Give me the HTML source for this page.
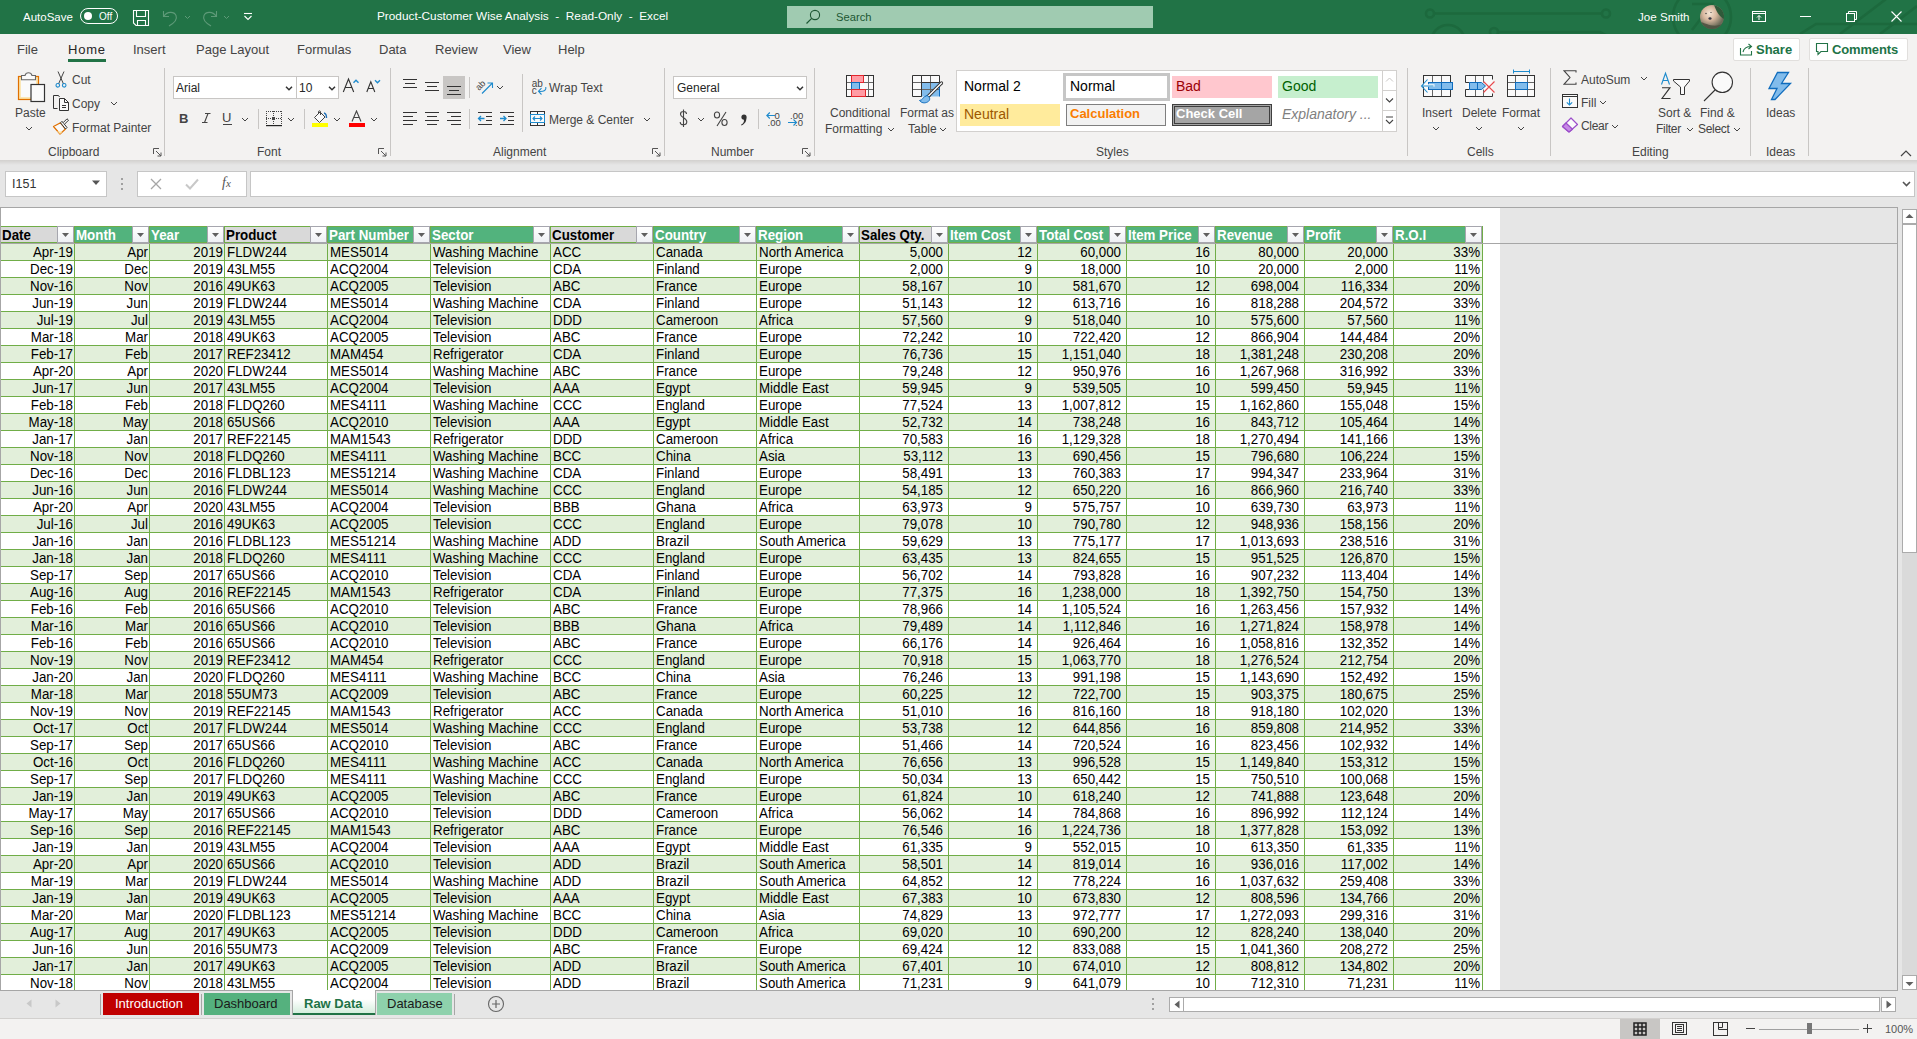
<!DOCTYPE html>
<html><head><meta charset="utf-8"><title>Excel</title>
<style>
*{margin:0;padding:0;box-sizing:border-box}
html,body{width:1917px;height:1039px;overflow:hidden;background:#E6E6E6;font-family:"Liberation Sans",sans-serif;position:relative}
.abs{position:absolute}
#sheet{position:absolute;left:0;top:0;width:1897px;height:990px;overflow:hidden}
.ht{font-weight:bold;font-size:13.33px;line-height:15px;white-space:nowrap;transform:scaleY(1.1);transform-origin:0 11.9px}
.dt{font-size:13.33px;line-height:16px;white-space:nowrap;color:#000;transform:scaleY(1.1);transform-origin:0 12.4px}
.btn{width:17px;height:17px;border:1px solid #A6A6AE;background:linear-gradient(#fff,#EEF0F4)}
.btn i{position:absolute;left:4px;top:6px;width:0;height:0;border-left:3.5px solid transparent;border-right:3.5px solid transparent;border-top:4px solid #5F5F5F}
.tt{white-space:nowrap;line-height:16px}
.rt{white-space:nowrap;font-size:12px;line-height:16px;color:#444}
.gl{color:#444}
.sep{width:1px;background:#C8C6C4}
.box{background:#fff;border:1px solid #C8C6C4}
.sty{font-size:14px}
.tab{font-size:13px}

</style></head><body>
<div id="titlebar" class="abs" style="left:0;top:0;width:1917px;height:34px;background:#217346;overflow:hidden">
  <svg class="abs" style="left:1400px;top:0" width="517" height="34" viewBox="0 0 517 34">
    <g fill="none" stroke="#1C693D" stroke-width="2.6">
      <path d="M34 13.5 H201"/><circle cx="30" cy="13.5" r="4"/><circle cx="206" cy="13.5" r="4"/>
      <circle cx="302" cy="17" r="29"/>
      <path d="M292 4 H312 L292 30"/>
      <circle cx="48" cy="42" r="17"/>
      <circle cx="94" cy="32" r="4"/><path d="M98 32 H200 L215 40"/>
      <path d="M400 34 L416 24 H517"/><path d="M440 34 L490 -4"/><path d="M480 34 L517 6"/>
    </g>
  </svg>
  <div class="abs tt" style="left:23px;top:9px;font-size:11.5px;color:#fff">AutoSave</div>
  <div class="abs" style="left:80px;top:8px;width:38px;height:16px;border:1px solid #fff;border-radius:8px"></div>
  <div class="abs" style="left:84px;top:12px;width:8px;height:8px;background:#fff;border-radius:50%"></div>
  <div class="abs tt" style="left:99px;top:8.5px;font-size:10px;color:#fff">Off</div>
  <svg class="abs" style="left:132px;top:9px" width="19" height="18" viewBox="0 0 19 18"><path d="M1.5 1.5 H16.5 V16.5 H4 L1.5 14 Z" fill="none" stroke="#fff" stroke-width="1.1"/><path d="M4.5 1.5 V7.5 H13.5 V1.5" fill="none" stroke="#fff" stroke-width="1.1"/><path d="M5.5 16.5 V11.5 H13.5 V16.5" fill="none" stroke="#fff" stroke-width="1.1"/></svg>
  <svg class="abs" style="left:162px;top:10px" width="30" height="18" viewBox="0 0 30 18"><path d="M1.5 1 V6.5 H7" fill="none" stroke="#5E9A78" stroke-width="1.1"/><path d="M2 6 C 5 1.5, 12 1, 14 5.5 C 15.5 9, 13 12.5, 7 16" fill="none" stroke="#5E9A78" stroke-width="1.1"/><path d="M23 6 L25.5 8.5 L28 6" fill="none" stroke="#5E9A78" stroke-width="1"/></svg>
  <svg class="abs" style="left:201px;top:10px" width="30" height="18" viewBox="0 0 30 18"><path d="M15.5 1 V6.5 H10" fill="none" stroke="#5E9A78" stroke-width="1.1"/><path d="M15 6 C 12 1.5, 5 1, 3 5.5 C 1.5 9, 4 12.5, 10 16" fill="none" stroke="#5E9A78" stroke-width="1.1"/><path d="M23 6 L25.5 8.5 L28 6" fill="none" stroke="#5E9A78" stroke-width="1"/></svg>
  <svg class="abs" style="left:243px;top:12px" width="10" height="9" viewBox="0 0 10 9"><path d="M1 1.5 H9" stroke="#fff" stroke-width="1.1"/><path d="M1.5 4 L5 7.5 L8.5 4" fill="none" stroke="#fff" stroke-width="1.1"/></svg>
  <div class="abs tt" style="left:377px;top:8px;font-size:11.8px;color:#fff;white-space:pre">Product-Customer Wise Analysis  -  Read-Only  -  Excel</div>
  <div class="abs" style="left:787px;top:6px;width:366px;height:22px;background:#A0CBB1"></div>
  <svg class="abs" style="left:805px;top:9px" width="16" height="16" viewBox="0 0 16 16">
    <circle cx="10" cy="6" r="4.6" fill="none" stroke="#1D5733" stroke-width="1.1"/>
    <path d="M6.7 9.3 L1.5 14.5" stroke="#1D5733" stroke-width="1.2"/>
  </svg>
  <div class="abs tt" style="left:836px;top:9px;font-size:11.2px;color:#1D5733">Search</div>
  <div class="abs tt" style="left:1638px;top:9px;font-size:11.6px;color:#fff">Joe Smith</div>
  <svg class="abs" style="left:1700px;top:5px" width="24" height="24" viewBox="0 0 24 24">
    <defs><clipPath id="av"><circle cx="12" cy="12" r="12"/></clipPath>
    <radialGradient id="avg" cx="40%" cy="35%" r="60%"><stop offset="0" stop-color="#F4E6D6"/><stop offset="0.45" stop-color="#D9B9A0"/><stop offset="1" stop-color="#6A6A58"/></radialGradient></defs>
    <g clip-path="url(#av)">
      <rect width="24" height="24" fill="url(#avg)"/>
      <path d="M14 0 H24 V14 C 20 12, 17 8, 14 0 Z" fill="#2F5A3A"/>
      <path d="M0 17 C 6 18, 14 24, 24 18 V24 H0 Z" fill="#4A5040" opacity="0.85"/>
      <circle cx="6" cy="8.5" r="0.7" fill="#333"/><circle cx="11" cy="7.5" r="0.6" fill="#333"/>
      <ellipse cx="10" cy="13.5" rx="1.6" ry="1.2" fill="#3A3A48"/>
      
    </g>
  </svg>
  <svg class="abs" style="left:1752px;top:11px" width="14" height="11" viewBox="0 0 14 11">
    <rect x="0.5" y="0.5" width="13" height="10" fill="none" stroke="#fff" stroke-width="1"/>
    <path d="M0.5 2.5 H13.5" stroke="#fff" stroke-width="1"/>
    <path d="M7 9 V4.5 M5 6.5 L7 4.5 L9 6.5" fill="none" stroke="#fff" stroke-width="1"/>
  </svg>
  <div class="abs" style="left:1800px;top:16px;width:11px;height:1px;background:#fff"></div>
  <svg class="abs" style="left:1845px;top:10px" width="13" height="13" viewBox="0 0 13 13">
    <rect x="1.5" y="3.5" width="8" height="8" fill="none" stroke="#fff" stroke-width="1"/>
    <path d="M3.5 3.5 V1.5 H11.5 V9.5 H9.5" fill="none" stroke="#fff" stroke-width="1"/>
  </svg>
  <svg class="abs" style="left:1891px;top:11px" width="11" height="11" viewBox="0 0 11 11">
    <path d="M0.5 0.5 L10.5 10.5 M10.5 0.5 L0.5 10.5" stroke="#fff" stroke-width="1.1"/>
  </svg>
</div>

<div id="ribbon" class="abs" style="left:0;top:34px;width:1917px;height:126px;background:#F3F2F1"></div>
<div class="abs" style="left:0;top:160px;width:1917px;height:5px;background:linear-gradient(#D2D0CE,#E6E6E6)"></div>
<!-- tabs -->
<div class="abs rt tab" style="left:17px;top:42px">File</div>
<div class="abs rt tab" style="left:68px;top:42px;color:#262626;letter-spacing:0.8px">Home</div>
<div class="abs" style="left:68px;top:59px;width:38px;height:3px;background:#217346"></div>
<div class="abs rt tab" style="left:133px;top:42px">Insert</div>
<div class="abs rt tab" style="left:196px;top:42px">Page Layout</div>
<div class="abs rt tab" style="left:297px;top:42px">Formulas</div>
<div class="abs rt tab" style="left:379px;top:42px">Data</div>
<div class="abs rt tab" style="left:435px;top:42px">Review</div>
<div class="abs rt tab" style="left:503px;top:42px">View</div>
<div class="abs rt tab" style="left:558px;top:42px">Help</div>
<!-- share / comments -->
<div class="abs" style="left:1733px;top:38px;width:67px;height:23px;background:#fff;border:1px solid #E1DFDD;border-radius:2px"></div>
<svg class="abs" style="left:1738px;top:41px" width="16" height="16" viewBox="0 0 16 16"><path d="M2.5 7 V14 H13.5 V10" fill="none" stroke="#217346" stroke-width="1.1"/><path d="M5 11 C 6 7, 9 5.5, 13 5.5 M10.5 3 L13.5 5.5 L10.5 8" fill="none" stroke="#217346" stroke-width="1.1"/></svg>
<div class="abs rt" style="left:1756px;top:42px;font-size:13px;color:#217346;font-weight:bold">Share</div>
<div class="abs" style="left:1809px;top:38px;width:99px;height:23px;background:#fff;border:1px solid #E1DFDD;border-radius:2px"></div>
<svg class="abs" style="left:1815px;top:42px" width="14" height="14" viewBox="0 0 14 14"><path d="M1.5 1.5 H12.5 V9.5 H6 L3 12.5 V9.5 H1.5 Z" fill="none" stroke="#217346" stroke-width="1.1"/></svg>
<div class="abs rt" style="left:1832px;top:42px;font-size:13px;color:#217346;font-weight:bold;letter-spacing:-0.15px">Comments</div>
<!-- separators -->
<div class="abs sep" style="left:164px;top:68px;height:88px"></div>
<div class="abs sep" style="left:390px;top:68px;height:88px"></div>
<div class="abs sep" style="left:664px;top:68px;height:88px"></div>
<div class="abs sep" style="left:814px;top:68px;height:88px"></div>
<div class="abs sep" style="left:1407px;top:68px;height:88px"></div>
<div class="abs sep" style="left:1550px;top:68px;height:88px"></div>
<div class="abs sep" style="left:1750px;top:68px;height:88px"></div>
<div class="abs sep" style="left:1808px;top:68px;height:88px"></div>
<!-- group labels -->
<div class="abs rt gl" style="left:48px;top:144px">Clipboard</div>
<div class="abs rt gl" style="left:257px;top:144px">Font</div>
<div class="abs rt gl" style="left:493px;top:144px">Alignment</div>
<div class="abs rt gl" style="left:711px;top:144px">Number</div>
<div class="abs rt gl" style="left:1096px;top:144px">Styles</div>
<div class="abs rt gl" style="left:1467px;top:144px">Cells</div>
<div class="abs rt gl" style="left:1632px;top:144px">Editing</div>
<div class="abs rt gl" style="left:1766px;top:144px">Ideas</div>
<!-- dialog launchers -->
<svg class="abs" style="left:153px;top:148px" width="9" height="9" viewBox="0 0 9 9"><path d="M0.5 6 V0.5 H6 M3 3 L8 8 M4.5 8 H8 V4.5" fill="none" stroke="#555" stroke-width="1"/></svg>
<svg class="abs" style="left:378px;top:148px" width="9" height="9" viewBox="0 0 9 9"><path d="M0.5 6 V0.5 H6 M3 3 L8 8 M4.5 8 H8 V4.5" fill="none" stroke="#555" stroke-width="1"/></svg>
<svg class="abs" style="left:652px;top:148px" width="9" height="9" viewBox="0 0 9 9"><path d="M0.5 6 V0.5 H6 M3 3 L8 8 M4.5 8 H8 V4.5" fill="none" stroke="#555" stroke-width="1"/></svg>
<svg class="abs" style="left:802px;top:148px" width="9" height="9" viewBox="0 0 9 9"><path d="M0.5 6 V0.5 H6 M3 3 L8 8 M4.5 8 H8 V4.5" fill="none" stroke="#555" stroke-width="1"/></svg>
<!-- collapse -->
<svg class="abs" style="left:1900px;top:149px" width="12" height="8" viewBox="0 0 12 8"><path d="M1 7 L6 2 L11 7" fill="none" stroke="#444" stroke-width="1.2"/></svg>

<!-- CLIPBOARD -->
<svg class="abs" style="left:17px;top:71px" width="30" height="32" viewBox="0 0 30 32">
  <rect x="1.5" y="5.5" width="20" height="23" fill="#FCE3A6" stroke="#E07000" stroke-width="1.2"/>
  <rect x="3.8" y="7.8" width="15.4" height="18.4" fill="#FAFAFA"/>
  <path d="M4.5 8.8 V4.5 H8 C9 0.8, 14 0.8, 15 4.5 H18.5 V8.8 Z" fill="#FAFAFA" stroke="#666" stroke-width="1.1"/>
  <rect x="14" y="13.5" width="13.5" height="17" fill="#FAFAFA" stroke="#333" stroke-width="1.2"/>
</svg>
<div class="abs rt" style="left:15px;top:105px">Paste</div>
<svg class="abs chev" style="left:25px;top:126px" width="8" height="5" viewBox="0 0 8 5"><path d="M1 1 L4 4 L7 1" fill="none" stroke="#444" stroke-width="1"/></svg>
<svg class="abs" style="left:55px;top:71px" width="12" height="17" viewBox="0 0 12 17">
  <path d="M3 0.5 L8.5 13 M9 0.5 L3.5 13" stroke="#444" stroke-width="1"/>
  <circle cx="2.8" cy="14.3" r="1.8" fill="none" stroke="#1E8BCD" stroke-width="1.1"/>
  <circle cx="9.2" cy="14.3" r="1.8" fill="none" stroke="#1E8BCD" stroke-width="1.1"/>
</svg>
<div class="abs rt" style="left:72px;top:72px">Cut</div>
<svg class="abs" style="left:52px;top:94px" width="18" height="18" viewBox="0 0 18 18"><path d="M7.5 3 L6.5 1.5 H1.5 V14.5 H5.5" fill="none" stroke="#333" stroke-width="1"/><path d="M7.5 4.5 H12.5 L16.5 8.5 V16.5 H7.5 Z" fill="#FAFAFA" stroke="#333" stroke-width="1"/><path d="M12.5 4.5 V8.5 H16.5" fill="none" stroke="#333" stroke-width="1"/><path d="M10 11.5 H14 M10 13.5 H14" stroke="#333" stroke-width="1"/></svg>
<div class="abs rt" style="left:72px;top:96px">Copy</div>
<svg class="abs chev" style="left:110px;top:101px" width="8" height="5" viewBox="0 0 8 5"><path d="M1 1 L4 4 L7 1" fill="none" stroke="#444" stroke-width="1"/></svg>
<svg class="abs" style="left:52px;top:118px" width="18" height="18" viewBox="0 0 18 18"><path d="M1.5 8.5 L8.5 4.8 L13.5 11 L8 16 Z" fill="#FAFAFA" stroke="#E07000" stroke-width="1.2" stroke-linejoin="round"/><path d="M5 13 L8 16 L10.5 13.8 Z" fill="#FCE3A6"/><path d="M8.5 4.8 L13.5 11 L15 9.5 L10 3.3 Z" fill="#FAFAFA" stroke="#333" stroke-width="1"/><path d="M12.5 6.2 L16.5 2.2 L15 0.8 L11 4.8" fill="#FAFAFA" stroke="#333" stroke-width="1"/></svg>
<div class="abs rt" style="left:72px;top:120px">Format Painter</div>

<!-- FONT -->
<div class="abs box" style="left:173px;top:76px;width:124px;height:23px"></div>
<div class="abs rt" style="left:176px;top:80px;color:#262626">Arial</div>
<svg class="abs chev" style="left:285px;top:86px" width="8" height="5" viewBox="0 0 8 5"><path d="M1 0.8 L4 3.8 L7 0.8" fill="none" stroke="#333" stroke-width="1.5"/></svg>
<div class="abs box" style="left:296px;top:76px;width:43px;height:23px"></div>
<div class="abs rt" style="left:299px;top:80px;color:#262626">10</div>
<svg class="abs chev" style="left:328px;top:86px" width="8" height="5" viewBox="0 0 8 5"><path d="M1 0.8 L4 3.8 L7 0.8" fill="none" stroke="#333" stroke-width="1.5"/></svg>

<svg class="abs" style="left:340px;top:76px" width="45" height="18" viewBox="0 0 45 18"><path d="M3.3 16 L8.5 3 L13.7 16 M5.2 11.5 H11.8" fill="none" stroke="#333" stroke-width="1.1"/><path d="M13.5 6.8 L16 4.3 L18.5 6.8" fill="none" stroke="#1E8BCD" stroke-width="1.4"/><path d="M26.8 16 L30.8 5.8 L34.8 16 M28.3 12.5 H33.3" fill="none" stroke="#333" stroke-width="1.1"/><path d="M35 4.2 L37.5 6.7 L40 4.2" fill="none" stroke="#1E8BCD" stroke-width="1.4"/></svg>


<div class="abs rt" style="left:179px;top:111px;font-weight:bold;font-size:13px">B</div>
<svg class="abs" style="left:200px;top:111px" width="12" height="14" viewBox="0 0 12 14"><path d="M5 2.5 H10.5 M2 11.5 H7.5 M8 2.5 L4.5 11.5" stroke="#444" stroke-width="1.1" fill="none"/></svg>
<div class="abs rt" style="left:222px;top:110px;font-size:13px">U</div>
<div class="abs" style="left:223px;top:124px;width:9px;height:1px;background:#444"></div>
<svg class="abs chev" style="left:241px;top:117px" width="8" height="5" viewBox="0 0 8 5"><path d="M1 1 L4 4 L7 1" fill="none" stroke="#444" stroke-width="1"/></svg>
<div class="abs sep" style="left:258px;top:109px;height:20px"></div>
<svg class="abs" style="left:266px;top:111px" width="16" height="16" viewBox="0 0 16 16"><g fill="#444"><rect x="0" y="0" width="1" height="1"/><rect x="0" y="7" width="1" height="1"/><rect x="2" y="0" width="1" height="1"/><rect x="2" y="7" width="1" height="1"/><rect x="4" y="0" width="1" height="1"/><rect x="4" y="7" width="1" height="1"/><rect x="6" y="0" width="1" height="1"/><rect x="6" y="7" width="1" height="1"/><rect x="8" y="0" width="1" height="1"/><rect x="8" y="7" width="1" height="1"/><rect x="10" y="0" width="1" height="1"/><rect x="10" y="7" width="1" height="1"/><rect x="12" y="0" width="1" height="1"/><rect x="12" y="7" width="1" height="1"/><rect x="14" y="0" width="1" height="1"/><rect x="14" y="7" width="1" height="1"/><rect x="0" y="0" width="1" height="1"/><rect x="15" y="0" width="1" height="1"/><rect x="7" y="0" width="1" height="1"/><rect x="0" y="2" width="1" height="1"/><rect x="15" y="2" width="1" height="1"/><rect x="7" y="2" width="1" height="1"/><rect x="0" y="4" width="1" height="1"/><rect x="15" y="4" width="1" height="1"/><rect x="7" y="4" width="1" height="1"/><rect x="0" y="6" width="1" height="1"/><rect x="15" y="6" width="1" height="1"/><rect x="7" y="6" width="1" height="1"/><rect x="0" y="8" width="1" height="1"/><rect x="15" y="8" width="1" height="1"/><rect x="7" y="8" width="1" height="1"/><rect x="0" y="10" width="1" height="1"/><rect x="15" y="10" width="1" height="1"/><rect x="7" y="10" width="1" height="1"/><rect x="0" y="12" width="1" height="1"/><rect x="15" y="12" width="1" height="1"/><rect x="7" y="12" width="1" height="1"/><rect x="6" y="6" width="3" height="3"/></g><rect x="0" y="14" width="16" height="1.2" fill="#222"/></svg>
<svg class="abs chev" style="left:287px;top:117px" width="8" height="5" viewBox="0 0 8 5"><path d="M1 1 L4 4 L7 1" fill="none" stroke="#444" stroke-width="1"/></svg>
<div class="abs sep" style="left:304px;top:109px;height:20px"></div>
<svg class="abs" style="left:312px;top:110px" width="17" height="18" viewBox="0 0 17 18"><path d="M2.5 7.5 L8 2 L13 7 L7.5 12.5 Z" fill="#FAFAFA" stroke="#444" stroke-width="1"/><path d="M6.5 3.5 V1.8 C6.5 0.5, 8.5 0.5, 8.5 1.8 V5" fill="none" stroke="#444" stroke-width="1"/><path d="M12 3 C 14 3.5, 14.5 5, 14.5 8" fill="none" stroke="#1E6FB8" stroke-width="1.4"/><rect x="0" y="13" width="16" height="4" fill="#FFFF00"/></svg>
<svg class="abs chev" style="left:333px;top:117px" width="8" height="5" viewBox="0 0 8 5"><path d="M1 1 L4 4 L7 1" fill="none" stroke="#444" stroke-width="1"/></svg>
<svg class="abs" style="left:351px;top:110px" width="12" height="12" viewBox="0 0 12 12"><path d="M1 11.5 L5.5 1 L10 11.5 M2.8 7.5 H8.2" fill="none" stroke="#444" stroke-width="1.1"/></svg>
<div class="abs" style="left:349px;top:123px;width:16px;height:4px;background:#FF0000"></div>
<svg class="abs chev" style="left:370px;top:117px" width="8" height="5" viewBox="0 0 8 5"><path d="M1 1 L4 4 L7 1" fill="none" stroke="#444" stroke-width="1"/></svg>

<!-- ALIGNMENT -->

<svg class="abs" style="left:395px;top:70px" width="125" height="65" viewBox="0 0 125 65"><rect x="48" y="6" width="22" height="23" fill="#C8C6C4"/><path d="M8 9.5 H22 M10 13.5 H20 M8 17.5 H22 M30 12.5 H44 M32 16.5 H42 M30 20.5 H44 M52 16.5 H66 M54 20.5 H64 M52 24.5 H66 M8 42.5 H22 M8 46.5 H18 M8 50.5 H22 M8 54.5 H18 M30 42.5 H44 M32 46.5 H42 M30 50.5 H44 M32 54.5 H42 M52 42.5 H66 M56 46.5 H66 M52 50.5 H66 M56 54.5 H66 M83 42.5 H97 M91 46.5 H97 M91 50.5 H97 M83 54.5 H97 M105 42.5 H119 M113 46.5 H119 M113 50.5 H119 M105 54.5 H119" stroke="#333" stroke-width="1" fill="none"/><path d="M89.5 48.5 H83.5 M86 46 L83.5 48.5 L86 51 M105 48.5 H111 M108.5 46 L111 48.5 L108.5 51" stroke="#1E8BCD" stroke-width="1.3" fill="none"/><text x="0" y="0" font-size="9" font-family="Liberation Sans" fill="#444" transform="translate(84 21) rotate(-45)">ab</text><path d="M87 23.5 L97.5 13 M92.5 13 H97.5 V18" stroke="#1E8BCD" stroke-width="1.1" fill="none"/></svg>
<div class="abs sep" style="left:469px;top:77px;height:21px"></div>

<svg class="abs chev" style="left:496px;top:85px" width="8" height="5" viewBox="0 0 8 5"><path d="M1 1 L4 4 L7 1" fill="none" stroke="#444" stroke-width="1"/></svg>

<div class="abs sep" style="left:469px;top:109px;height:20px"></div>

<div class="abs sep" style="left:522px;top:74px;height:58px"></div>
<svg class="abs" style="left:525px;top:74px" width="25" height="58" viewBox="0 0 25 58"><text x="6.8" y="12.6" font-size="10" font-family="Liberation Sans" fill="#444">ab</text><text x="6.8" y="19.8" font-size="10" font-family="Liberation Sans" fill="#444">c</text><path d="M20.8 13 C 21.5 16, 19.5 17.8, 14 17.5 M16.5 14.2 L13.5 17.3 L16.5 20.5" fill="none" stroke="#1E8BCD" stroke-width="1.1"/><rect x="5.5" y="37.5" width="14" height="14" fill="#FAFAFA" stroke="#333" stroke-width="1"/><path d="M12.5 37.5 V51.5" stroke="#333" stroke-width="1"/><rect x="5.5" y="40.5" width="14" height="8" fill="#FAFAFA" stroke="#1E8BCD" stroke-width="1"/><path d="M8 44.5 H17 M10 42.5 L8 44.5 L10 46.5 M15 42.5 L17 44.5 L15 46.5" fill="none" stroke="#1E8BCD" stroke-width="1.1"/></svg>
<div class="abs rt" style="left:549px;top:80px">Wrap Text</div>

<div class="abs rt" style="left:549px;top:112px">Merge &amp; Center</div>
<svg class="abs chev" style="left:643px;top:117px" width="8" height="5" viewBox="0 0 8 5"><path d="M1 1 L4 4 L7 1" fill="none" stroke="#444" stroke-width="1"/></svg>

<!-- NUMBER -->
<div class="abs box" style="left:673px;top:76px;width:134px;height:23px"></div>
<div class="abs rt" style="left:677px;top:80px;color:#262626">General</div>
<svg class="abs chev" style="left:796px;top:86px" width="8" height="5" viewBox="0 0 8 5"><path d="M1 0.8 L4 3.8 L7 0.8" fill="none" stroke="#333" stroke-width="1.5"/></svg>

<svg class="abs chev" style="left:697px;top:117px" width="8" height="5" viewBox="0 0 8 5"><path d="M1 1 L4 4 L7 1" fill="none" stroke="#444" stroke-width="1"/></svg>


<div class="abs sep" style="left:758px;top:109px;height:20px"></div>
<svg class="abs" style="left:670px;top:104px" width="145" height="28" viewBox="0 0 145 28"><path d="M16.5 10 C 16.5 8, 15 7.5, 13.5 7.5 C 11.5 7.5, 10.5 8.5, 10.5 10.2 C 10.5 14, 16.8 13.5, 16.8 17.8 C 16.8 19.8, 15.2 20.8, 13.5 20.8 C 11.5 20.8, 10.2 19.8, 10.2 18 M13.5 5.5 V23" fill="none" stroke="#444" stroke-width="1.1"/><ellipse cx="47" cy="11" rx="2.6" ry="3" fill="none" stroke="#444" stroke-width="1.1"/><ellipse cx="54.5" cy="18.5" rx="2.6" ry="3" fill="none" stroke="#444" stroke-width="1.1"/><path d="M56 8 L47 22" stroke="#444" stroke-width="1.1"/><circle cx="74" cy="13" r="2.6" fill="#333"/><path d="M75.5 12 C 77.5 15, 76 19.5, 71.5 21.5 L71 20.8 C 74 19, 74.5 17, 73.5 15 Z" fill="#333"/><text x="104.5" y="14.5" font-size="9.5" font-family="Liberation Sans" fill="#444">0</text><text x="97.5" y="22" font-size="9.5" font-family="Liberation Sans" fill="#444">.00</text><path d="M105 11.5 H97 M99.8 8.5 L96.8 11.5 L99.8 14.5" fill="none" stroke="#1E8BCD" stroke-width="1.1"/><text x="120" y="14.5" font-size="9.5" font-family="Liberation Sans" fill="#444">.00</text><text x="125" y="22" font-size="9.5" font-family="Liberation Sans" fill="#444">.0</text><path d="M118 18.5 H126.5 M123.5 15.5 L126.5 18.5 L123.5 21.5" fill="none" stroke="#1E8BCD" stroke-width="1.1"/></svg>

<!-- Conditional formatting / format as table -->
<svg class="abs" style="left:840px;top:70px" width="110" height="35" viewBox="0 0 110 35"><rect x="6.5" y="5.5" width="27" height="21" fill="#FAFAFA"/><path d="M6.5 12.5 H33.5 M6.5 19.5 H33.5 M28.5 5.5 V26.5" stroke="#666" stroke-width="1" fill="none"/><rect x="6.5" y="5.5" width="27" height="21" fill="none" stroke="#333" stroke-width="1"/><rect x="11.5" y="5.5" width="12" height="7" fill="#FF9CA4" stroke="#E3262C" stroke-width="1"/><rect x="11.5" y="12.5" width="8" height="7" fill="#82BCEB" stroke="#0F6CBD" stroke-width="1"/><rect x="11.5" y="19.5" width="14" height="7" fill="#FF9CA4" stroke="#E3262C" stroke-width="1"/><rect x="72.5" y="5.5" width="27" height="21" fill="#FAFAFA"/><rect x="81.5" y="12.5" width="18" height="14" fill="#82BCEB"/><path d="M72.5 12.5 H81.5 M72.5 19.5 H99.5 M81.5 5.5 V12.5 M90.5 5.5 V26.5" stroke="#666" stroke-width="1" fill="none"/><path d="M81.5 26.5 V12.5 H99.5 V26.5" stroke="#0F6CBD" stroke-width="1" fill="none"/><path d="M81.5 26.5 V5.5 H99.5 V12.5 H81.5" stroke="#333" stroke-width="1" fill="none"/><path d="M81.5 26.5 H72.5 V5.5" stroke="#333" stroke-width="1" fill="none"/><path d="M72.5 5.5 H81.5" stroke="#333" stroke-width="1" fill="none"/><path d="M101.5 13 L88 26.5" stroke="#333" stroke-width="3.2" stroke-linecap="round"/><path d="M101.5 13 L88 26.5" stroke="#fff" stroke-width="1.4" stroke-linecap="round"/><path d="M87 25.5 C 90.5 27, 90.5 30.5, 87.5 32 C 84.5 33.5, 81.5 33, 79.5 30.5 C 82.5 30.5, 83 26.5, 87 25.5 Z" fill="#82BCEB" stroke="#0F6CBD" stroke-width="1"/></svg>
<div class="abs rt" style="left:830px;top:105px">Conditional</div>
<div class="abs rt" style="left:825px;top:121px">Formatting</div>
<svg class="abs chev" style="left:887px;top:127px" width="8" height="5" viewBox="0 0 8 5"><path d="M1 1 L4 4 L7 1" fill="none" stroke="#444" stroke-width="1"/></svg>

<div class="abs rt" style="left:900px;top:105px">Format as</div>
<div class="abs rt" style="left:908px;top:121px">Table</div>
<svg class="abs chev" style="left:939px;top:127px" width="8" height="5" viewBox="0 0 8 5"><path d="M1 1 L4 4 L7 1" fill="none" stroke="#444" stroke-width="1"/></svg>

<!-- STYLES gallery -->
<div class="abs" style="left:956px;top:70px;width:441px;height:62px;background:#fff;border:1px solid #D2D0CE"></div>
<div class="abs rt sty" style="left:964px;top:78px;color:#000">Normal 2</div>
<div class="abs" style="left:1063px;top:73px;width:107px;height:28px;border:3px solid #C6C6C6"></div>
<div class="abs rt sty" style="left:1070px;top:78px;color:#000">Normal</div>
<div class="abs" style="left:1172px;top:76px;width:100px;height:22px;background:#FFC7CE"></div>
<div class="abs rt sty" style="left:1176px;top:78px;color:#9C0006">Bad</div>
<div class="abs" style="left:1278px;top:76px;width:100px;height:22px;background:#C6EFCE"></div>
<div class="abs rt sty" style="left:1282px;top:78px;color:#006100">Good</div>
<div class="abs" style="left:960px;top:104px;width:100px;height:22px;background:#FFEB9C"></div>
<div class="abs rt sty" style="left:964px;top:106px;color:#9C5700">Neutral</div>
<div class="abs" style="left:1066px;top:104px;width:100px;height:22px;background:#F2F2F2;border:1px solid #7F7F7F"></div>
<div class="abs rt sty" style="left:1070px;top:106px;color:#FA7D00;font-weight:bold;font-size:13px">Calculation</div>
<div class="abs" style="left:1172px;top:104px;width:100px;height:22px;background:#A5A5A5;border:3px double #3F3F3F"></div>
<div class="abs rt sty" style="left:1176px;top:106px;color:#fff;font-weight:bold;font-size:13px">Check Cell</div>
<div class="abs rt sty" style="left:1282px;top:106px;color:#7F7F7F;font-style:italic">Explanatory ...</div>
<div class="abs" style="left:1382px;top:70px;width:15px;height:62px;border-left:1px solid #D2D0CE"></div>
<div class="abs" style="left:1382px;top:90px;width:15px;height:1px;background:#D2D0CE"></div>
<div class="abs" style="left:1382px;top:110px;width:15px;height:1px;background:#D2D0CE"></div>
<svg class="abs" style="left:1385px;top:77px" width="9" height="5" viewBox="0 0 9 5"><path d="M1 4.5 L4.5 1 L8 4.5" fill="none" stroke="#C8C6C4" stroke-width="1"/></svg>
<svg class="abs" style="left:1385px;top:98px" width="9" height="5" viewBox="0 0 9 5"><path d="M1 0.5 L4.5 4 L8 0.5" fill="none" stroke="#444" stroke-width="1.1"/></svg>
<svg class="abs" style="left:1385px;top:116px" width="9" height="9" viewBox="0 0 9 9"><path d="M1 1 H8 M1 4 L4.5 7.5 L8 4" fill="none" stroke="#444" stroke-width="1.1"/></svg>

<!-- CELLS -->
<svg class="abs" style="left:1415px;top:66px" width="130" height="36" viewBox="0 0 130 36"><rect x="8.5" y="9.5" width="27" height="21" fill="#FAFAFA"/><path d="M17.5 9.5 V30.5 M26.5 9.5 V30.5" stroke="#666" stroke-width="1"/><rect x="8.5" y="9.5" width="27" height="21" fill="none" stroke="#333" stroke-width="1"/><rect x="13.5" y="16.5" width="24" height="7" fill="#82BCEB" stroke="#0F6CBD" stroke-width="1"/><path d="M26.5 16.5 V23.5" stroke="#0F6CBD" stroke-width="1"/><path d="M7.5 19.5 H19.5" stroke="#fff" stroke-width="2.4"/><path d="M12.5 13.5 L6.5 20.0 L12.5 26.5 M6.5 20.0 H18.5" stroke="#1E8BCD" stroke-width="1.1" fill="none"/><rect x="50.5" y="9.5" width="27" height="21" fill="#FAFAFA"/><path d="M60.5 9.5 V16.5 M60.5 23.5 V30.5 M68.5 9.5 V16.5 M68.5 23.5 V30.5" stroke="#666" stroke-width="1"/><path d="M54.5 16.5 H50.5 V9.5 H77.5 V13.5 M54.5 23.5 H50.5 V30.5 H77.5 V27.5" stroke="#333" stroke-width="1" fill="none"/><path d="M54.5 16.5 H66.5 L70.5 20.0 L66.5 23.5 H54.5 Z" fill="#82BCEB" stroke="#0F6CBD" stroke-width="1"/><path d="M62.5 16.5 V23.5" stroke="#0F6CBD" stroke-width="1"/><path d="M68.5 15.5 L79.5 26.5 M79.5 15.5 L68.5 26.5" stroke="#E8484B" stroke-width="1.1"/><rect x="92.5" y="9.5" width="27" height="21" fill="#FAFAFA"/><path d="M100.5 9.5 V30.5 M112.5 9.5 V30.5 M92.5 16.5 H119.5 M92.5 23.5 H119.5" stroke="#666" stroke-width="1"/><rect x="92.5" y="9.5" width="27" height="21" fill="none" stroke="#333" stroke-width="1"/><rect x="100.5" y="16.5" width="12" height="7" fill="#82BCEB" stroke="#0F6CBD" stroke-width="1"/><path d="M98.5 5.5 H114.5 M98.5 3.5 V7.5 M114.5 3.5 V7.5" stroke="#1E8BCD" stroke-width="1"/></svg>
<div class="abs rt" style="left:1422px;top:105px">Insert</div>
<svg class="abs chev" style="left:1432px;top:126px" width="8" height="5" viewBox="0 0 8 5"><path d="M1 1 L4 4 L7 1" fill="none" stroke="#444" stroke-width="1"/></svg>

<div class="abs rt" style="left:1462px;top:105px">Delete</div>
<svg class="abs chev" style="left:1475px;top:126px" width="8" height="5" viewBox="0 0 8 5"><path d="M1 1 L4 4 L7 1" fill="none" stroke="#444" stroke-width="1"/></svg>

<div class="abs rt" style="left:1502px;top:105px">Format</div>
<svg class="abs chev" style="left:1517px;top:126px" width="8" height="5" viewBox="0 0 8 5"><path d="M1 1 L4 4 L7 1" fill="none" stroke="#444" stroke-width="1"/></svg>

<!-- EDITING -->
<svg class="abs" style="left:1563px;top:70px" width="14" height="15" viewBox="0 0 14 15"><path d="M13 2.5 V0.7 H1 L7 7.5 L1 14.3 H13 V12.5" fill="none" stroke="#444" stroke-width="1.1"/></svg>
<div class="abs rt" style="left:1581px;top:72px">AutoSum</div>
<svg class="abs chev" style="left:1640px;top:76px" width="8" height="5" viewBox="0 0 8 5"><path d="M1 1 L4 4 L7 1" fill="none" stroke="#444" stroke-width="1"/></svg>
<svg class="abs" style="left:1562px;top:93px" width="17" height="16" viewBox="0 0 17 16"><rect x="0.5" y="1.5" width="15" height="13" fill="#FAFAFA" stroke="#333" stroke-width="1"/><path d="M0.5 3.5 H15.5" stroke="#333" stroke-width="1"/><path d="M7.5 5.5 V12 M4.8 9.3 L7.5 12 L10.2 9.3" fill="none" stroke="#1E8BCD" stroke-width="1.1"/></svg>
<div class="abs rt" style="left:1581px;top:95px">Fill</div>
<svg class="abs chev" style="left:1599px;top:100px" width="8" height="5" viewBox="0 0 8 5"><path d="M1 1 L4 4 L7 1" fill="none" stroke="#444" stroke-width="1"/></svg>
<svg class="abs" style="left:1561px;top:116px" width="18" height="17" viewBox="0 0 18 17"><path d="M1.5 10.5 L10 2 L16.5 8.5 L8 16 Z" fill="#FAFAFA" stroke="#9B4DCA" stroke-width="1.2" stroke-linejoin="round"/><path d="M1.5 10.5 L5 7 L11.5 13.3 L8 16 Z" fill="#C789E6" stroke="#9B4DCA" stroke-width="1.2" stroke-linejoin="round"/></svg>
<div class="abs rt" style="left:1581px;top:118px;letter-spacing:-0.3px">Clear</div>
<svg class="abs chev" style="left:1611px;top:124px" width="8" height="5" viewBox="0 0 8 5"><path d="M1 1 L4 4 L7 1" fill="none" stroke="#444" stroke-width="1"/></svg>
<svg class="abs" style="left:1655px;top:66px" width="145" height="40" viewBox="0 0 145 40"><path d="M6.5 18.5 L10.5 7.2 L14.5 18.5 M8 14.5 H13" stroke="#1E8BCD" stroke-width="1.1" fill="none"/><path d="M7 21.7 H15 L7 32.5 H15.5" stroke="#333" stroke-width="1.1" fill="none"/><path d="M18.5 13.5 H34.5 V15 L29.5 21 V28.5 H25.5 V21 L18.5 15 Z" fill="#FAFAFA" stroke="#333" stroke-width="1" stroke-linejoin="round"/><circle cx="67.3" cy="16.3" r="10.2" fill="#FAFAFA" stroke="#333" stroke-width="1.1"/><path d="M60 24 L49 35" stroke="#333" stroke-width="1.1"/><path d="M122.5 6.5 H133.5 L126.5 17.5 H135.5 L120 33.5 H116.5 L122 22.5 H114 Z" fill="#82BCEB" stroke="#0F6CBD" stroke-width="1.3" stroke-linejoin="miter"/></svg>
<div class="abs rt" style="left:1658px;top:105px">Sort &amp;</div>
<div class="abs rt" style="left:1656px;top:121px;letter-spacing:-0.3px">Filter</div>
<svg class="abs chev" style="left:1686px;top:127px" width="8" height="5" viewBox="0 0 8 5"><path d="M1 1 L4 4 L7 1" fill="none" stroke="#444" stroke-width="1"/></svg>

<div class="abs rt" style="left:1700px;top:105px">Find &amp;</div>
<div class="abs rt" style="left:1698px;top:121px;letter-spacing:-0.3px">Select</div>
<svg class="abs chev" style="left:1733px;top:127px" width="8" height="5" viewBox="0 0 8 5"><path d="M1 1 L4 4 L7 1" fill="none" stroke="#444" stroke-width="1"/></svg>

<!-- IDEAS -->

<div class="abs rt" style="left:1766px;top:105px">Ideas</div>

<div class="abs box" style="left:5px;top:171px;width:102px;height:26px;border-color:#C6C6C6"></div>
<div class="abs tt" style="left:12px;top:176px;font-size:12.5px;color:#333">I151</div>
<svg class="abs" style="left:91px;top:180px" width="10" height="6" viewBox="0 0 10 6"><path d="M1 0.5 H9 L5 5 Z" fill="#555"/></svg>
<div class="abs" style="left:121px;top:178px;width:2px;height:2px;background:#A0A0A0"></div>
<div class="abs" style="left:121px;top:183px;width:2px;height:2px;background:#A0A0A0"></div>
<div class="abs" style="left:121px;top:188px;width:2px;height:2px;background:#A0A0A0"></div>
<div class="abs box" style="left:137px;top:171px;width:110px;height:26px;border-color:#C6C6C6"></div>
<svg class="abs" style="left:150px;top:178px" width="12" height="12" viewBox="0 0 12 12"><path d="M1 1 L11 11 M11 1 L1 11" stroke="#A6A6A6" stroke-width="1.3"/></svg>
<svg class="abs" style="left:185px;top:178px" width="14" height="12" viewBox="0 0 14 12"><path d="M1 6.5 L5 10.5 L13 1.5" fill="none" stroke="#C8C8C8" stroke-width="2"/></svg>
<div class="abs tt" style="left:222px;top:175px;font-size:14px;color:#555;font-family:'Liberation Serif';font-style:italic">f<span style="font-size:11px">x</span></div>
<div class="abs box" style="left:250px;top:171px;width:1665px;height:26px;border-color:#C6C6C6"></div>
<svg class="abs" style="left:1902px;top:181px" width="9" height="6" viewBox="0 0 9 6"><path d="M1 1 L4.5 4.5 L8 1" fill="none" stroke="#555" stroke-width="1.6"/></svg>
<!-- sheet frame -->
<div class="abs" style="left:0;top:207px;width:1898px;height:1px;background:#A6A6A6"></div>
<div class="abs" style="left:0;top:207px;width:1px;height:784px;background:#A6A6A6"></div>
<div class="abs" style="left:1897px;top:207px;width:1px;height:784px;background:#A6A6A6"></div>
<div class="abs" style="left:0;top:990px;width:1898px;height:1px;background:#A6A6A6"></div>
<!-- vertical scrollbar -->
<div class="abs" style="left:1902px;top:209px;width:15px;height:781px;background:#DADADA"></div>
<div class="abs" style="left:1902px;top:209px;width:15px;height:15px;background:#fff;border:1px solid #ABABAB"></div>
<svg class="abs" style="left:1905px;top:213px" width="9" height="6" viewBox="0 0 9 6"><path d="M0.5 5 L4.5 1 L8.5 5 Z" fill="#606060"/></svg>
<div class="abs" style="left:1902px;top:224px;width:15px;height:329px;background:#fff;border:1px solid #ABABAB"></div>
<div class="abs" style="left:1902px;top:975px;width:15px;height:15px;background:#fff;border:1px solid #ABABAB"></div>
<svg class="abs" style="left:1905px;top:981px" width="9" height="6" viewBox="0 0 9 6"><path d="M0.5 1 L4.5 5 L8.5 1 Z" fill="#606060"/></svg>

<div id="sheet">
<div class="abs" style="left:1px;top:208px;width:1499px;height:782px;background:#fff"></div>
<div class="abs" style="left:1px;top:226px;width:1481px;height:1px;background:#70AD47"></div>
<div class="abs" style="left:1px;top:244px;width:1481px;height:16px;background:#E2EFDA"></div>
<div class="abs" style="left:1px;top:260px;width:1481px;height:1px;background:#70AD47"></div>
<div class="abs" style="left:1px;top:277px;width:1481px;height:1px;background:#70AD47"></div>
<div class="abs" style="left:1px;top:278px;width:1481px;height:16px;background:#E2EFDA"></div>
<div class="abs" style="left:1px;top:294px;width:1481px;height:1px;background:#70AD47"></div>
<div class="abs" style="left:1px;top:311px;width:1481px;height:1px;background:#70AD47"></div>
<div class="abs" style="left:1px;top:312px;width:1481px;height:16px;background:#E2EFDA"></div>
<div class="abs" style="left:1px;top:328px;width:1481px;height:1px;background:#70AD47"></div>
<div class="abs" style="left:1px;top:345px;width:1481px;height:1px;background:#70AD47"></div>
<div class="abs" style="left:1px;top:346px;width:1481px;height:16px;background:#E2EFDA"></div>
<div class="abs" style="left:1px;top:362px;width:1481px;height:1px;background:#70AD47"></div>
<div class="abs" style="left:1px;top:379px;width:1481px;height:1px;background:#70AD47"></div>
<div class="abs" style="left:1px;top:380px;width:1481px;height:16px;background:#E2EFDA"></div>
<div class="abs" style="left:1px;top:396px;width:1481px;height:1px;background:#70AD47"></div>
<div class="abs" style="left:1px;top:413px;width:1481px;height:1px;background:#70AD47"></div>
<div class="abs" style="left:1px;top:414px;width:1481px;height:16px;background:#E2EFDA"></div>
<div class="abs" style="left:1px;top:430px;width:1481px;height:1px;background:#70AD47"></div>
<div class="abs" style="left:1px;top:447px;width:1481px;height:1px;background:#70AD47"></div>
<div class="abs" style="left:1px;top:448px;width:1481px;height:16px;background:#E2EFDA"></div>
<div class="abs" style="left:1px;top:464px;width:1481px;height:1px;background:#70AD47"></div>
<div class="abs" style="left:1px;top:481px;width:1481px;height:1px;background:#70AD47"></div>
<div class="abs" style="left:1px;top:482px;width:1481px;height:16px;background:#E2EFDA"></div>
<div class="abs" style="left:1px;top:498px;width:1481px;height:1px;background:#70AD47"></div>
<div class="abs" style="left:1px;top:515px;width:1481px;height:1px;background:#70AD47"></div>
<div class="abs" style="left:1px;top:516px;width:1481px;height:16px;background:#E2EFDA"></div>
<div class="abs" style="left:1px;top:532px;width:1481px;height:1px;background:#70AD47"></div>
<div class="abs" style="left:1px;top:549px;width:1481px;height:1px;background:#70AD47"></div>
<div class="abs" style="left:1px;top:550px;width:1481px;height:16px;background:#E2EFDA"></div>
<div class="abs" style="left:1px;top:566px;width:1481px;height:1px;background:#70AD47"></div>
<div class="abs" style="left:1px;top:583px;width:1481px;height:1px;background:#70AD47"></div>
<div class="abs" style="left:1px;top:584px;width:1481px;height:16px;background:#E2EFDA"></div>
<div class="abs" style="left:1px;top:600px;width:1481px;height:1px;background:#70AD47"></div>
<div class="abs" style="left:1px;top:617px;width:1481px;height:1px;background:#70AD47"></div>
<div class="abs" style="left:1px;top:618px;width:1481px;height:16px;background:#E2EFDA"></div>
<div class="abs" style="left:1px;top:634px;width:1481px;height:1px;background:#70AD47"></div>
<div class="abs" style="left:1px;top:651px;width:1481px;height:1px;background:#70AD47"></div>
<div class="abs" style="left:1px;top:652px;width:1481px;height:16px;background:#E2EFDA"></div>
<div class="abs" style="left:1px;top:668px;width:1481px;height:1px;background:#70AD47"></div>
<div class="abs" style="left:1px;top:685px;width:1481px;height:1px;background:#70AD47"></div>
<div class="abs" style="left:1px;top:686px;width:1481px;height:16px;background:#E2EFDA"></div>
<div class="abs" style="left:1px;top:702px;width:1481px;height:1px;background:#70AD47"></div>
<div class="abs" style="left:1px;top:719px;width:1481px;height:1px;background:#70AD47"></div>
<div class="abs" style="left:1px;top:720px;width:1481px;height:16px;background:#E2EFDA"></div>
<div class="abs" style="left:1px;top:736px;width:1481px;height:1px;background:#70AD47"></div>
<div class="abs" style="left:1px;top:753px;width:1481px;height:1px;background:#70AD47"></div>
<div class="abs" style="left:1px;top:754px;width:1481px;height:16px;background:#E2EFDA"></div>
<div class="abs" style="left:1px;top:770px;width:1481px;height:1px;background:#70AD47"></div>
<div class="abs" style="left:1px;top:787px;width:1481px;height:1px;background:#70AD47"></div>
<div class="abs" style="left:1px;top:788px;width:1481px;height:16px;background:#E2EFDA"></div>
<div class="abs" style="left:1px;top:804px;width:1481px;height:1px;background:#70AD47"></div>
<div class="abs" style="left:1px;top:821px;width:1481px;height:1px;background:#70AD47"></div>
<div class="abs" style="left:1px;top:822px;width:1481px;height:16px;background:#E2EFDA"></div>
<div class="abs" style="left:1px;top:838px;width:1481px;height:1px;background:#70AD47"></div>
<div class="abs" style="left:1px;top:855px;width:1481px;height:1px;background:#70AD47"></div>
<div class="abs" style="left:1px;top:856px;width:1481px;height:16px;background:#E2EFDA"></div>
<div class="abs" style="left:1px;top:872px;width:1481px;height:1px;background:#70AD47"></div>
<div class="abs" style="left:1px;top:889px;width:1481px;height:1px;background:#70AD47"></div>
<div class="abs" style="left:1px;top:890px;width:1481px;height:16px;background:#E2EFDA"></div>
<div class="abs" style="left:1px;top:906px;width:1481px;height:1px;background:#70AD47"></div>
<div class="abs" style="left:1px;top:923px;width:1481px;height:1px;background:#70AD47"></div>
<div class="abs" style="left:1px;top:924px;width:1481px;height:16px;background:#E2EFDA"></div>
<div class="abs" style="left:1px;top:940px;width:1481px;height:1px;background:#70AD47"></div>
<div class="abs" style="left:1px;top:957px;width:1481px;height:1px;background:#70AD47"></div>
<div class="abs" style="left:1px;top:958px;width:1481px;height:16px;background:#E2EFDA"></div>
<div class="abs" style="left:1px;top:974px;width:1481px;height:1px;background:#70AD47"></div>
<div class="abs" style="left:1px;top:227px;width:56px;height:15px;background:#D9D9D9"></div>
<div class="abs" style="left:1px;top:242px;width:56px;height:1px;background:#70AD47"></div>
<div class="abs ht" style="left:2px;top:228px;color:#000">Date</div>
<div class="abs btn" style="left:57px;top:226px"><svg width="7" height="4" style="position:absolute;left:4px;top:6px"><path d="M0 0H7L3.5 4Z" fill="#5F5F5F"/></svg></div>
<div class="abs" style="left:75px;top:227px;width:57px;height:15px;background:#52B37D"></div>
<div class="abs" style="left:75px;top:242px;width:57px;height:1px;background:#70AD47"></div>
<div class="abs ht" style="left:76px;top:228px;color:#fff">Month</div>
<div class="abs btn" style="left:132px;top:226px"><svg width="7" height="4" style="position:absolute;left:4px;top:6px"><path d="M0 0H7L3.5 4Z" fill="#5F5F5F"/></svg></div>
<div class="abs" style="left:150px;top:227px;width:57px;height:15px;background:#52B37D"></div>
<div class="abs" style="left:150px;top:242px;width:57px;height:1px;background:#70AD47"></div>
<div class="abs ht" style="left:151px;top:228px;color:#fff">Year</div>
<div class="abs btn" style="left:207px;top:226px"><svg width="7" height="4" style="position:absolute;left:4px;top:6px"><path d="M0 0H7L3.5 4Z" fill="#5F5F5F"/></svg></div>
<div class="abs" style="left:225px;top:227px;width:85px;height:15px;background:#D9D9D9"></div>
<div class="abs" style="left:225px;top:242px;width:85px;height:1px;background:#70AD47"></div>
<div class="abs ht" style="left:226px;top:228px;color:#000">Product</div>
<div class="abs btn" style="left:310px;top:226px"><svg width="7" height="4" style="position:absolute;left:4px;top:6px"><path d="M0 0H7L3.5 4Z" fill="#5F5F5F"/></svg></div>
<div class="abs" style="left:328px;top:227px;width:85px;height:15px;background:#52B37D"></div>
<div class="abs" style="left:328px;top:242px;width:85px;height:1px;background:#70AD47"></div>
<div class="abs ht" style="left:329px;top:228px;color:#fff">Part Number</div>
<div class="abs btn" style="left:413px;top:226px"><svg width="7" height="4" style="position:absolute;left:4px;top:6px"><path d="M0 0H7L3.5 4Z" fill="#5F5F5F"/></svg></div>
<div class="abs" style="left:431px;top:227px;width:102px;height:15px;background:#52B37D"></div>
<div class="abs" style="left:431px;top:242px;width:102px;height:1px;background:#70AD47"></div>
<div class="abs ht" style="left:432px;top:228px;color:#fff">Sector</div>
<div class="abs btn" style="left:533px;top:226px"><svg width="7" height="4" style="position:absolute;left:4px;top:6px"><path d="M0 0H7L3.5 4Z" fill="#5F5F5F"/></svg></div>
<div class="abs" style="left:551px;top:227px;width:85px;height:15px;background:#D9D9D9"></div>
<div class="abs" style="left:551px;top:242px;width:85px;height:1px;background:#70AD47"></div>
<div class="abs ht" style="left:552px;top:228px;color:#000">Customer</div>
<div class="abs btn" style="left:636px;top:226px"><svg width="7" height="4" style="position:absolute;left:4px;top:6px"><path d="M0 0H7L3.5 4Z" fill="#5F5F5F"/></svg></div>
<div class="abs" style="left:654px;top:227px;width:85px;height:15px;background:#52B37D"></div>
<div class="abs" style="left:654px;top:242px;width:85px;height:1px;background:#70AD47"></div>
<div class="abs ht" style="left:655px;top:228px;color:#fff">Country</div>
<div class="abs btn" style="left:739px;top:226px"><svg width="7" height="4" style="position:absolute;left:4px;top:6px"><path d="M0 0H7L3.5 4Z" fill="#5F5F5F"/></svg></div>
<div class="abs" style="left:757px;top:227px;width:85px;height:15px;background:#52B37D"></div>
<div class="abs" style="left:757px;top:242px;width:85px;height:1px;background:#70AD47"></div>
<div class="abs ht" style="left:758px;top:228px;color:#fff">Region</div>
<div class="abs btn" style="left:842px;top:226px"><svg width="7" height="4" style="position:absolute;left:4px;top:6px"><path d="M0 0H7L3.5 4Z" fill="#5F5F5F"/></svg></div>
<div class="abs" style="left:860px;top:227px;width:71px;height:15px;background:#D9D9D9"></div>
<div class="abs" style="left:860px;top:242px;width:71px;height:1px;background:#70AD47"></div>
<div class="abs ht" style="left:861px;top:228px;color:#000">Sales Qty.</div>
<div class="abs btn" style="left:931px;top:226px"><svg width="7" height="4" style="position:absolute;left:4px;top:6px"><path d="M0 0H7L3.5 4Z" fill="#5F5F5F"/></svg></div>
<div class="abs" style="left:949px;top:227px;width:71px;height:15px;background:#52B37D"></div>
<div class="abs" style="left:949px;top:242px;width:71px;height:1px;background:#70AD47"></div>
<div class="abs ht" style="left:950px;top:228px;color:#fff">Item Cost</div>
<div class="abs btn" style="left:1020px;top:226px"><svg width="7" height="4" style="position:absolute;left:4px;top:6px"><path d="M0 0H7L3.5 4Z" fill="#5F5F5F"/></svg></div>
<div class="abs" style="left:1038px;top:227px;width:71px;height:15px;background:#52B37D"></div>
<div class="abs" style="left:1038px;top:242px;width:71px;height:1px;background:#70AD47"></div>
<div class="abs ht" style="left:1039px;top:228px;color:#fff">Total Cost</div>
<div class="abs btn" style="left:1109px;top:226px"><svg width="7" height="4" style="position:absolute;left:4px;top:6px"><path d="M0 0H7L3.5 4Z" fill="#5F5F5F"/></svg></div>
<div class="abs" style="left:1127px;top:227px;width:71px;height:15px;background:#52B37D"></div>
<div class="abs" style="left:1127px;top:242px;width:71px;height:1px;background:#70AD47"></div>
<div class="abs ht" style="left:1128px;top:228px;color:#fff">Item Price</div>
<div class="abs btn" style="left:1198px;top:226px"><svg width="7" height="4" style="position:absolute;left:4px;top:6px"><path d="M0 0H7L3.5 4Z" fill="#5F5F5F"/></svg></div>
<div class="abs" style="left:1216px;top:227px;width:71px;height:15px;background:#52B37D"></div>
<div class="abs" style="left:1216px;top:242px;width:71px;height:1px;background:#70AD47"></div>
<div class="abs ht" style="left:1217px;top:228px;color:#fff">Revenue</div>
<div class="abs btn" style="left:1287px;top:226px"><svg width="7" height="4" style="position:absolute;left:4px;top:6px"><path d="M0 0H7L3.5 4Z" fill="#5F5F5F"/></svg></div>
<div class="abs" style="left:1305px;top:227px;width:71px;height:15px;background:#52B37D"></div>
<div class="abs" style="left:1305px;top:242px;width:71px;height:1px;background:#70AD47"></div>
<div class="abs ht" style="left:1306px;top:228px;color:#fff">Profit</div>
<div class="abs btn" style="left:1376px;top:226px"><svg width="7" height="4" style="position:absolute;left:4px;top:6px"><path d="M0 0H7L3.5 4Z" fill="#5F5F5F"/></svg></div>
<div class="abs" style="left:1394px;top:227px;width:71px;height:15px;background:#52B37D"></div>
<div class="abs" style="left:1394px;top:242px;width:71px;height:1px;background:#70AD47"></div>
<div class="abs ht" style="left:1395px;top:228px;color:#fff">R.O.I</div>
<div class="abs btn" style="left:1465px;top:226px"><svg width="7" height="4" style="position:absolute;left:4px;top:6px"><path d="M0 0H7L3.5 4Z" fill="#5F5F5F"/></svg></div>
<div class="abs" style="left:74px;top:226px;width:1px;height:764px;background:#70AD47"></div>
<div class="abs" style="left:149px;top:226px;width:1px;height:764px;background:#70AD47"></div>
<div class="abs" style="left:224px;top:226px;width:1px;height:764px;background:#70AD47"></div>
<div class="abs" style="left:327px;top:226px;width:1px;height:764px;background:#70AD47"></div>
<div class="abs" style="left:430px;top:226px;width:1px;height:764px;background:#70AD47"></div>
<div class="abs" style="left:550px;top:226px;width:1px;height:764px;background:#70AD47"></div>
<div class="abs" style="left:653px;top:226px;width:1px;height:764px;background:#70AD47"></div>
<div class="abs" style="left:756px;top:226px;width:1px;height:764px;background:#70AD47"></div>
<div class="abs" style="left:859px;top:226px;width:1px;height:764px;background:#70AD47"></div>
<div class="abs" style="left:948px;top:226px;width:1px;height:764px;background:#70AD47"></div>
<div class="abs" style="left:1037px;top:226px;width:1px;height:764px;background:#70AD47"></div>
<div class="abs" style="left:1126px;top:226px;width:1px;height:764px;background:#70AD47"></div>
<div class="abs" style="left:1215px;top:226px;width:1px;height:764px;background:#70AD47"></div>
<div class="abs" style="left:1304px;top:226px;width:1px;height:764px;background:#70AD47"></div>
<div class="abs" style="left:1393px;top:226px;width:1px;height:764px;background:#70AD47"></div>
<div class="abs" style="left:1482px;top:226px;width:1px;height:764px;background:#70AD47"></div>
<div class="abs" style="left:1px;top:243px;width:1896px;height:1px;background:#A6A6A6"></div>
<div class="abs dt" style="right:1824px;top:245px">Apr-19</div>
<div class="abs dt" style="right:1749px;top:245px">Apr</div>
<div class="abs dt" style="right:1674px;top:245px">2019</div>
<div class="abs dt" style="left:227px;top:245px">FLDW244</div>
<div class="abs dt" style="left:330px;top:245px">MES5014</div>
<div class="abs dt" style="left:433px;top:245px">Washing Machine</div>
<div class="abs dt" style="left:553px;top:245px">ACC</div>
<div class="abs dt" style="left:656px;top:245px">Canada</div>
<div class="abs dt" style="left:759px;top:245px">North America</div>
<div class="abs dt" style="right:954px;top:245px">5,000</div>
<div class="abs dt" style="right:865px;top:245px">12</div>
<div class="abs dt" style="right:776px;top:245px">60,000</div>
<div class="abs dt" style="right:687px;top:245px">16</div>
<div class="abs dt" style="right:598px;top:245px">80,000</div>
<div class="abs dt" style="right:509px;top:245px">20,000</div>
<div class="abs dt" style="right:417px;top:245px">33%</div>
<div class="abs dt" style="right:1824px;top:262px">Dec-19</div>
<div class="abs dt" style="right:1749px;top:262px">Dec</div>
<div class="abs dt" style="right:1674px;top:262px">2019</div>
<div class="abs dt" style="left:227px;top:262px">43LM55</div>
<div class="abs dt" style="left:330px;top:262px">ACQ2004</div>
<div class="abs dt" style="left:433px;top:262px">Television</div>
<div class="abs dt" style="left:553px;top:262px">CDA</div>
<div class="abs dt" style="left:656px;top:262px">Finland</div>
<div class="abs dt" style="left:759px;top:262px">Europe</div>
<div class="abs dt" style="right:954px;top:262px">2,000</div>
<div class="abs dt" style="right:865px;top:262px">9</div>
<div class="abs dt" style="right:776px;top:262px">18,000</div>
<div class="abs dt" style="right:687px;top:262px">10</div>
<div class="abs dt" style="right:598px;top:262px">20,000</div>
<div class="abs dt" style="right:509px;top:262px">2,000</div>
<div class="abs dt" style="right:417px;top:262px">11%</div>
<div class="abs dt" style="right:1824px;top:279px">Nov-16</div>
<div class="abs dt" style="right:1749px;top:279px">Nov</div>
<div class="abs dt" style="right:1674px;top:279px">2016</div>
<div class="abs dt" style="left:227px;top:279px">49UK63</div>
<div class="abs dt" style="left:330px;top:279px">ACQ2005</div>
<div class="abs dt" style="left:433px;top:279px">Television</div>
<div class="abs dt" style="left:553px;top:279px">ABC</div>
<div class="abs dt" style="left:656px;top:279px">France</div>
<div class="abs dt" style="left:759px;top:279px">Europe</div>
<div class="abs dt" style="right:954px;top:279px">58,167</div>
<div class="abs dt" style="right:865px;top:279px">10</div>
<div class="abs dt" style="right:776px;top:279px">581,670</div>
<div class="abs dt" style="right:687px;top:279px">12</div>
<div class="abs dt" style="right:598px;top:279px">698,004</div>
<div class="abs dt" style="right:509px;top:279px">116,334</div>
<div class="abs dt" style="right:417px;top:279px">20%</div>
<div class="abs dt" style="right:1824px;top:296px">Jun-19</div>
<div class="abs dt" style="right:1749px;top:296px">Jun</div>
<div class="abs dt" style="right:1674px;top:296px">2019</div>
<div class="abs dt" style="left:227px;top:296px">FLDW244</div>
<div class="abs dt" style="left:330px;top:296px">MES5014</div>
<div class="abs dt" style="left:433px;top:296px">Washing Machine</div>
<div class="abs dt" style="left:553px;top:296px">CDA</div>
<div class="abs dt" style="left:656px;top:296px">Finland</div>
<div class="abs dt" style="left:759px;top:296px">Europe</div>
<div class="abs dt" style="right:954px;top:296px">51,143</div>
<div class="abs dt" style="right:865px;top:296px">12</div>
<div class="abs dt" style="right:776px;top:296px">613,716</div>
<div class="abs dt" style="right:687px;top:296px">16</div>
<div class="abs dt" style="right:598px;top:296px">818,288</div>
<div class="abs dt" style="right:509px;top:296px">204,572</div>
<div class="abs dt" style="right:417px;top:296px">33%</div>
<div class="abs dt" style="right:1824px;top:313px">Jul-19</div>
<div class="abs dt" style="right:1749px;top:313px">Jul</div>
<div class="abs dt" style="right:1674px;top:313px">2019</div>
<div class="abs dt" style="left:227px;top:313px">43LM55</div>
<div class="abs dt" style="left:330px;top:313px">ACQ2004</div>
<div class="abs dt" style="left:433px;top:313px">Television</div>
<div class="abs dt" style="left:553px;top:313px">DDD</div>
<div class="abs dt" style="left:656px;top:313px">Cameroon</div>
<div class="abs dt" style="left:759px;top:313px">Africa</div>
<div class="abs dt" style="right:954px;top:313px">57,560</div>
<div class="abs dt" style="right:865px;top:313px">9</div>
<div class="abs dt" style="right:776px;top:313px">518,040</div>
<div class="abs dt" style="right:687px;top:313px">10</div>
<div class="abs dt" style="right:598px;top:313px">575,600</div>
<div class="abs dt" style="right:509px;top:313px">57,560</div>
<div class="abs dt" style="right:417px;top:313px">11%</div>
<div class="abs dt" style="right:1824px;top:330px">Mar-18</div>
<div class="abs dt" style="right:1749px;top:330px">Mar</div>
<div class="abs dt" style="right:1674px;top:330px">2018</div>
<div class="abs dt" style="left:227px;top:330px">49UK63</div>
<div class="abs dt" style="left:330px;top:330px">ACQ2005</div>
<div class="abs dt" style="left:433px;top:330px">Television</div>
<div class="abs dt" style="left:553px;top:330px">ABC</div>
<div class="abs dt" style="left:656px;top:330px">France</div>
<div class="abs dt" style="left:759px;top:330px">Europe</div>
<div class="abs dt" style="right:954px;top:330px">72,242</div>
<div class="abs dt" style="right:865px;top:330px">10</div>
<div class="abs dt" style="right:776px;top:330px">722,420</div>
<div class="abs dt" style="right:687px;top:330px">12</div>
<div class="abs dt" style="right:598px;top:330px">866,904</div>
<div class="abs dt" style="right:509px;top:330px">144,484</div>
<div class="abs dt" style="right:417px;top:330px">20%</div>
<div class="abs dt" style="right:1824px;top:347px">Feb-17</div>
<div class="abs dt" style="right:1749px;top:347px">Feb</div>
<div class="abs dt" style="right:1674px;top:347px">2017</div>
<div class="abs dt" style="left:227px;top:347px">REF23412</div>
<div class="abs dt" style="left:330px;top:347px">MAM454</div>
<div class="abs dt" style="left:433px;top:347px">Refrigerator</div>
<div class="abs dt" style="left:553px;top:347px">CDA</div>
<div class="abs dt" style="left:656px;top:347px">Finland</div>
<div class="abs dt" style="left:759px;top:347px">Europe</div>
<div class="abs dt" style="right:954px;top:347px">76,736</div>
<div class="abs dt" style="right:865px;top:347px">15</div>
<div class="abs dt" style="right:776px;top:347px">1,151,040</div>
<div class="abs dt" style="right:687px;top:347px">18</div>
<div class="abs dt" style="right:598px;top:347px">1,381,248</div>
<div class="abs dt" style="right:509px;top:347px">230,208</div>
<div class="abs dt" style="right:417px;top:347px">20%</div>
<div class="abs dt" style="right:1824px;top:364px">Apr-20</div>
<div class="abs dt" style="right:1749px;top:364px">Apr</div>
<div class="abs dt" style="right:1674px;top:364px">2020</div>
<div class="abs dt" style="left:227px;top:364px">FLDW244</div>
<div class="abs dt" style="left:330px;top:364px">MES5014</div>
<div class="abs dt" style="left:433px;top:364px">Washing Machine</div>
<div class="abs dt" style="left:553px;top:364px">ABC</div>
<div class="abs dt" style="left:656px;top:364px">France</div>
<div class="abs dt" style="left:759px;top:364px">Europe</div>
<div class="abs dt" style="right:954px;top:364px">79,248</div>
<div class="abs dt" style="right:865px;top:364px">12</div>
<div class="abs dt" style="right:776px;top:364px">950,976</div>
<div class="abs dt" style="right:687px;top:364px">16</div>
<div class="abs dt" style="right:598px;top:364px">1,267,968</div>
<div class="abs dt" style="right:509px;top:364px">316,992</div>
<div class="abs dt" style="right:417px;top:364px">33%</div>
<div class="abs dt" style="right:1824px;top:381px">Jun-17</div>
<div class="abs dt" style="right:1749px;top:381px">Jun</div>
<div class="abs dt" style="right:1674px;top:381px">2017</div>
<div class="abs dt" style="left:227px;top:381px">43LM55</div>
<div class="abs dt" style="left:330px;top:381px">ACQ2004</div>
<div class="abs dt" style="left:433px;top:381px">Television</div>
<div class="abs dt" style="left:553px;top:381px">AAA</div>
<div class="abs dt" style="left:656px;top:381px">Egypt</div>
<div class="abs dt" style="left:759px;top:381px">Middle East</div>
<div class="abs dt" style="right:954px;top:381px">59,945</div>
<div class="abs dt" style="right:865px;top:381px">9</div>
<div class="abs dt" style="right:776px;top:381px">539,505</div>
<div class="abs dt" style="right:687px;top:381px">10</div>
<div class="abs dt" style="right:598px;top:381px">599,450</div>
<div class="abs dt" style="right:509px;top:381px">59,945</div>
<div class="abs dt" style="right:417px;top:381px">11%</div>
<div class="abs dt" style="right:1824px;top:398px">Feb-18</div>
<div class="abs dt" style="right:1749px;top:398px">Feb</div>
<div class="abs dt" style="right:1674px;top:398px">2018</div>
<div class="abs dt" style="left:227px;top:398px">FLDQ260</div>
<div class="abs dt" style="left:330px;top:398px">MES4111</div>
<div class="abs dt" style="left:433px;top:398px">Washing Machine</div>
<div class="abs dt" style="left:553px;top:398px">CCC</div>
<div class="abs dt" style="left:656px;top:398px">England</div>
<div class="abs dt" style="left:759px;top:398px">Europe</div>
<div class="abs dt" style="right:954px;top:398px">77,524</div>
<div class="abs dt" style="right:865px;top:398px">13</div>
<div class="abs dt" style="right:776px;top:398px">1,007,812</div>
<div class="abs dt" style="right:687px;top:398px">15</div>
<div class="abs dt" style="right:598px;top:398px">1,162,860</div>
<div class="abs dt" style="right:509px;top:398px">155,048</div>
<div class="abs dt" style="right:417px;top:398px">15%</div>
<div class="abs dt" style="right:1824px;top:415px">May-18</div>
<div class="abs dt" style="right:1749px;top:415px">May</div>
<div class="abs dt" style="right:1674px;top:415px">2018</div>
<div class="abs dt" style="left:227px;top:415px">65US66</div>
<div class="abs dt" style="left:330px;top:415px">ACQ2010</div>
<div class="abs dt" style="left:433px;top:415px">Television</div>
<div class="abs dt" style="left:553px;top:415px">AAA</div>
<div class="abs dt" style="left:656px;top:415px">Egypt</div>
<div class="abs dt" style="left:759px;top:415px">Middle East</div>
<div class="abs dt" style="right:954px;top:415px">52,732</div>
<div class="abs dt" style="right:865px;top:415px">14</div>
<div class="abs dt" style="right:776px;top:415px">738,248</div>
<div class="abs dt" style="right:687px;top:415px">16</div>
<div class="abs dt" style="right:598px;top:415px">843,712</div>
<div class="abs dt" style="right:509px;top:415px">105,464</div>
<div class="abs dt" style="right:417px;top:415px">14%</div>
<div class="abs dt" style="right:1824px;top:432px">Jan-17</div>
<div class="abs dt" style="right:1749px;top:432px">Jan</div>
<div class="abs dt" style="right:1674px;top:432px">2017</div>
<div class="abs dt" style="left:227px;top:432px">REF22145</div>
<div class="abs dt" style="left:330px;top:432px">MAM1543</div>
<div class="abs dt" style="left:433px;top:432px">Refrigerator</div>
<div class="abs dt" style="left:553px;top:432px">DDD</div>
<div class="abs dt" style="left:656px;top:432px">Cameroon</div>
<div class="abs dt" style="left:759px;top:432px">Africa</div>
<div class="abs dt" style="right:954px;top:432px">70,583</div>
<div class="abs dt" style="right:865px;top:432px">16</div>
<div class="abs dt" style="right:776px;top:432px">1,129,328</div>
<div class="abs dt" style="right:687px;top:432px">18</div>
<div class="abs dt" style="right:598px;top:432px">1,270,494</div>
<div class="abs dt" style="right:509px;top:432px">141,166</div>
<div class="abs dt" style="right:417px;top:432px">13%</div>
<div class="abs dt" style="right:1824px;top:449px">Nov-18</div>
<div class="abs dt" style="right:1749px;top:449px">Nov</div>
<div class="abs dt" style="right:1674px;top:449px">2018</div>
<div class="abs dt" style="left:227px;top:449px">FLDQ260</div>
<div class="abs dt" style="left:330px;top:449px">MES4111</div>
<div class="abs dt" style="left:433px;top:449px">Washing Machine</div>
<div class="abs dt" style="left:553px;top:449px">BCC</div>
<div class="abs dt" style="left:656px;top:449px">China</div>
<div class="abs dt" style="left:759px;top:449px">Asia</div>
<div class="abs dt" style="right:954px;top:449px">53,112</div>
<div class="abs dt" style="right:865px;top:449px">13</div>
<div class="abs dt" style="right:776px;top:449px">690,456</div>
<div class="abs dt" style="right:687px;top:449px">15</div>
<div class="abs dt" style="right:598px;top:449px">796,680</div>
<div class="abs dt" style="right:509px;top:449px">106,224</div>
<div class="abs dt" style="right:417px;top:449px">15%</div>
<div class="abs dt" style="right:1824px;top:466px">Dec-16</div>
<div class="abs dt" style="right:1749px;top:466px">Dec</div>
<div class="abs dt" style="right:1674px;top:466px">2016</div>
<div class="abs dt" style="left:227px;top:466px">FLDBL123</div>
<div class="abs dt" style="left:330px;top:466px">MES51214</div>
<div class="abs dt" style="left:433px;top:466px">Washing Machine</div>
<div class="abs dt" style="left:553px;top:466px">CDA</div>
<div class="abs dt" style="left:656px;top:466px">Finland</div>
<div class="abs dt" style="left:759px;top:466px">Europe</div>
<div class="abs dt" style="right:954px;top:466px">58,491</div>
<div class="abs dt" style="right:865px;top:466px">13</div>
<div class="abs dt" style="right:776px;top:466px">760,383</div>
<div class="abs dt" style="right:687px;top:466px">17</div>
<div class="abs dt" style="right:598px;top:466px">994,347</div>
<div class="abs dt" style="right:509px;top:466px">233,964</div>
<div class="abs dt" style="right:417px;top:466px">31%</div>
<div class="abs dt" style="right:1824px;top:483px">Jun-16</div>
<div class="abs dt" style="right:1749px;top:483px">Jun</div>
<div class="abs dt" style="right:1674px;top:483px">2016</div>
<div class="abs dt" style="left:227px;top:483px">FLDW244</div>
<div class="abs dt" style="left:330px;top:483px">MES5014</div>
<div class="abs dt" style="left:433px;top:483px">Washing Machine</div>
<div class="abs dt" style="left:553px;top:483px">CCC</div>
<div class="abs dt" style="left:656px;top:483px">England</div>
<div class="abs dt" style="left:759px;top:483px">Europe</div>
<div class="abs dt" style="right:954px;top:483px">54,185</div>
<div class="abs dt" style="right:865px;top:483px">12</div>
<div class="abs dt" style="right:776px;top:483px">650,220</div>
<div class="abs dt" style="right:687px;top:483px">16</div>
<div class="abs dt" style="right:598px;top:483px">866,960</div>
<div class="abs dt" style="right:509px;top:483px">216,740</div>
<div class="abs dt" style="right:417px;top:483px">33%</div>
<div class="abs dt" style="right:1824px;top:500px">Apr-20</div>
<div class="abs dt" style="right:1749px;top:500px">Apr</div>
<div class="abs dt" style="right:1674px;top:500px">2020</div>
<div class="abs dt" style="left:227px;top:500px">43LM55</div>
<div class="abs dt" style="left:330px;top:500px">ACQ2004</div>
<div class="abs dt" style="left:433px;top:500px">Television</div>
<div class="abs dt" style="left:553px;top:500px">BBB</div>
<div class="abs dt" style="left:656px;top:500px">Ghana</div>
<div class="abs dt" style="left:759px;top:500px">Africa</div>
<div class="abs dt" style="right:954px;top:500px">63,973</div>
<div class="abs dt" style="right:865px;top:500px">9</div>
<div class="abs dt" style="right:776px;top:500px">575,757</div>
<div class="abs dt" style="right:687px;top:500px">10</div>
<div class="abs dt" style="right:598px;top:500px">639,730</div>
<div class="abs dt" style="right:509px;top:500px">63,973</div>
<div class="abs dt" style="right:417px;top:500px">11%</div>
<div class="abs dt" style="right:1824px;top:517px">Jul-16</div>
<div class="abs dt" style="right:1749px;top:517px">Jul</div>
<div class="abs dt" style="right:1674px;top:517px">2016</div>
<div class="abs dt" style="left:227px;top:517px">49UK63</div>
<div class="abs dt" style="left:330px;top:517px">ACQ2005</div>
<div class="abs dt" style="left:433px;top:517px">Television</div>
<div class="abs dt" style="left:553px;top:517px">CCC</div>
<div class="abs dt" style="left:656px;top:517px">England</div>
<div class="abs dt" style="left:759px;top:517px">Europe</div>
<div class="abs dt" style="right:954px;top:517px">79,078</div>
<div class="abs dt" style="right:865px;top:517px">10</div>
<div class="abs dt" style="right:776px;top:517px">790,780</div>
<div class="abs dt" style="right:687px;top:517px">12</div>
<div class="abs dt" style="right:598px;top:517px">948,936</div>
<div class="abs dt" style="right:509px;top:517px">158,156</div>
<div class="abs dt" style="right:417px;top:517px">20%</div>
<div class="abs dt" style="right:1824px;top:534px">Jan-16</div>
<div class="abs dt" style="right:1749px;top:534px">Jan</div>
<div class="abs dt" style="right:1674px;top:534px">2016</div>
<div class="abs dt" style="left:227px;top:534px">FLDBL123</div>
<div class="abs dt" style="left:330px;top:534px">MES51214</div>
<div class="abs dt" style="left:433px;top:534px">Washing Machine</div>
<div class="abs dt" style="left:553px;top:534px">ADD</div>
<div class="abs dt" style="left:656px;top:534px">Brazil</div>
<div class="abs dt" style="left:759px;top:534px">South America</div>
<div class="abs dt" style="right:954px;top:534px">59,629</div>
<div class="abs dt" style="right:865px;top:534px">13</div>
<div class="abs dt" style="right:776px;top:534px">775,177</div>
<div class="abs dt" style="right:687px;top:534px">17</div>
<div class="abs dt" style="right:598px;top:534px">1,013,693</div>
<div class="abs dt" style="right:509px;top:534px">238,516</div>
<div class="abs dt" style="right:417px;top:534px">31%</div>
<div class="abs dt" style="right:1824px;top:551px">Jan-18</div>
<div class="abs dt" style="right:1749px;top:551px">Jan</div>
<div class="abs dt" style="right:1674px;top:551px">2018</div>
<div class="abs dt" style="left:227px;top:551px">FLDQ260</div>
<div class="abs dt" style="left:330px;top:551px">MES4111</div>
<div class="abs dt" style="left:433px;top:551px">Washing Machine</div>
<div class="abs dt" style="left:553px;top:551px">CCC</div>
<div class="abs dt" style="left:656px;top:551px">England</div>
<div class="abs dt" style="left:759px;top:551px">Europe</div>
<div class="abs dt" style="right:954px;top:551px">63,435</div>
<div class="abs dt" style="right:865px;top:551px">13</div>
<div class="abs dt" style="right:776px;top:551px">824,655</div>
<div class="abs dt" style="right:687px;top:551px">15</div>
<div class="abs dt" style="right:598px;top:551px">951,525</div>
<div class="abs dt" style="right:509px;top:551px">126,870</div>
<div class="abs dt" style="right:417px;top:551px">15%</div>
<div class="abs dt" style="right:1824px;top:568px">Sep-17</div>
<div class="abs dt" style="right:1749px;top:568px">Sep</div>
<div class="abs dt" style="right:1674px;top:568px">2017</div>
<div class="abs dt" style="left:227px;top:568px">65US66</div>
<div class="abs dt" style="left:330px;top:568px">ACQ2010</div>
<div class="abs dt" style="left:433px;top:568px">Television</div>
<div class="abs dt" style="left:553px;top:568px">CDA</div>
<div class="abs dt" style="left:656px;top:568px">Finland</div>
<div class="abs dt" style="left:759px;top:568px">Europe</div>
<div class="abs dt" style="right:954px;top:568px">56,702</div>
<div class="abs dt" style="right:865px;top:568px">14</div>
<div class="abs dt" style="right:776px;top:568px">793,828</div>
<div class="abs dt" style="right:687px;top:568px">16</div>
<div class="abs dt" style="right:598px;top:568px">907,232</div>
<div class="abs dt" style="right:509px;top:568px">113,404</div>
<div class="abs dt" style="right:417px;top:568px">14%</div>
<div class="abs dt" style="right:1824px;top:585px">Aug-16</div>
<div class="abs dt" style="right:1749px;top:585px">Aug</div>
<div class="abs dt" style="right:1674px;top:585px">2016</div>
<div class="abs dt" style="left:227px;top:585px">REF22145</div>
<div class="abs dt" style="left:330px;top:585px">MAM1543</div>
<div class="abs dt" style="left:433px;top:585px">Refrigerator</div>
<div class="abs dt" style="left:553px;top:585px">CDA</div>
<div class="abs dt" style="left:656px;top:585px">Finland</div>
<div class="abs dt" style="left:759px;top:585px">Europe</div>
<div class="abs dt" style="right:954px;top:585px">77,375</div>
<div class="abs dt" style="right:865px;top:585px">16</div>
<div class="abs dt" style="right:776px;top:585px">1,238,000</div>
<div class="abs dt" style="right:687px;top:585px">18</div>
<div class="abs dt" style="right:598px;top:585px">1,392,750</div>
<div class="abs dt" style="right:509px;top:585px">154,750</div>
<div class="abs dt" style="right:417px;top:585px">13%</div>
<div class="abs dt" style="right:1824px;top:602px">Feb-16</div>
<div class="abs dt" style="right:1749px;top:602px">Feb</div>
<div class="abs dt" style="right:1674px;top:602px">2016</div>
<div class="abs dt" style="left:227px;top:602px">65US66</div>
<div class="abs dt" style="left:330px;top:602px">ACQ2010</div>
<div class="abs dt" style="left:433px;top:602px">Television</div>
<div class="abs dt" style="left:553px;top:602px">ABC</div>
<div class="abs dt" style="left:656px;top:602px">France</div>
<div class="abs dt" style="left:759px;top:602px">Europe</div>
<div class="abs dt" style="right:954px;top:602px">78,966</div>
<div class="abs dt" style="right:865px;top:602px">14</div>
<div class="abs dt" style="right:776px;top:602px">1,105,524</div>
<div class="abs dt" style="right:687px;top:602px">16</div>
<div class="abs dt" style="right:598px;top:602px">1,263,456</div>
<div class="abs dt" style="right:509px;top:602px">157,932</div>
<div class="abs dt" style="right:417px;top:602px">14%</div>
<div class="abs dt" style="right:1824px;top:619px">Mar-16</div>
<div class="abs dt" style="right:1749px;top:619px">Mar</div>
<div class="abs dt" style="right:1674px;top:619px">2016</div>
<div class="abs dt" style="left:227px;top:619px">65US66</div>
<div class="abs dt" style="left:330px;top:619px">ACQ2010</div>
<div class="abs dt" style="left:433px;top:619px">Television</div>
<div class="abs dt" style="left:553px;top:619px">BBB</div>
<div class="abs dt" style="left:656px;top:619px">Ghana</div>
<div class="abs dt" style="left:759px;top:619px">Africa</div>
<div class="abs dt" style="right:954px;top:619px">79,489</div>
<div class="abs dt" style="right:865px;top:619px">14</div>
<div class="abs dt" style="right:776px;top:619px">1,112,846</div>
<div class="abs dt" style="right:687px;top:619px">16</div>
<div class="abs dt" style="right:598px;top:619px">1,271,824</div>
<div class="abs dt" style="right:509px;top:619px">158,978</div>
<div class="abs dt" style="right:417px;top:619px">14%</div>
<div class="abs dt" style="right:1824px;top:636px">Feb-16</div>
<div class="abs dt" style="right:1749px;top:636px">Feb</div>
<div class="abs dt" style="right:1674px;top:636px">2016</div>
<div class="abs dt" style="left:227px;top:636px">65US66</div>
<div class="abs dt" style="left:330px;top:636px">ACQ2010</div>
<div class="abs dt" style="left:433px;top:636px">Television</div>
<div class="abs dt" style="left:553px;top:636px">ABC</div>
<div class="abs dt" style="left:656px;top:636px">France</div>
<div class="abs dt" style="left:759px;top:636px">Europe</div>
<div class="abs dt" style="right:954px;top:636px">66,176</div>
<div class="abs dt" style="right:865px;top:636px">14</div>
<div class="abs dt" style="right:776px;top:636px">926,464</div>
<div class="abs dt" style="right:687px;top:636px">16</div>
<div class="abs dt" style="right:598px;top:636px">1,058,816</div>
<div class="abs dt" style="right:509px;top:636px">132,352</div>
<div class="abs dt" style="right:417px;top:636px">14%</div>
<div class="abs dt" style="right:1824px;top:653px">Nov-19</div>
<div class="abs dt" style="right:1749px;top:653px">Nov</div>
<div class="abs dt" style="right:1674px;top:653px">2019</div>
<div class="abs dt" style="left:227px;top:653px">REF23412</div>
<div class="abs dt" style="left:330px;top:653px">MAM454</div>
<div class="abs dt" style="left:433px;top:653px">Refrigerator</div>
<div class="abs dt" style="left:553px;top:653px">CCC</div>
<div class="abs dt" style="left:656px;top:653px">England</div>
<div class="abs dt" style="left:759px;top:653px">Europe</div>
<div class="abs dt" style="right:954px;top:653px">70,918</div>
<div class="abs dt" style="right:865px;top:653px">15</div>
<div class="abs dt" style="right:776px;top:653px">1,063,770</div>
<div class="abs dt" style="right:687px;top:653px">18</div>
<div class="abs dt" style="right:598px;top:653px">1,276,524</div>
<div class="abs dt" style="right:509px;top:653px">212,754</div>
<div class="abs dt" style="right:417px;top:653px">20%</div>
<div class="abs dt" style="right:1824px;top:670px">Jan-20</div>
<div class="abs dt" style="right:1749px;top:670px">Jan</div>
<div class="abs dt" style="right:1674px;top:670px">2020</div>
<div class="abs dt" style="left:227px;top:670px">FLDQ260</div>
<div class="abs dt" style="left:330px;top:670px">MES4111</div>
<div class="abs dt" style="left:433px;top:670px">Washing Machine</div>
<div class="abs dt" style="left:553px;top:670px">BCC</div>
<div class="abs dt" style="left:656px;top:670px">China</div>
<div class="abs dt" style="left:759px;top:670px">Asia</div>
<div class="abs dt" style="right:954px;top:670px">76,246</div>
<div class="abs dt" style="right:865px;top:670px">13</div>
<div class="abs dt" style="right:776px;top:670px">991,198</div>
<div class="abs dt" style="right:687px;top:670px">15</div>
<div class="abs dt" style="right:598px;top:670px">1,143,690</div>
<div class="abs dt" style="right:509px;top:670px">152,492</div>
<div class="abs dt" style="right:417px;top:670px">15%</div>
<div class="abs dt" style="right:1824px;top:687px">Mar-18</div>
<div class="abs dt" style="right:1749px;top:687px">Mar</div>
<div class="abs dt" style="right:1674px;top:687px">2018</div>
<div class="abs dt" style="left:227px;top:687px">55UM73</div>
<div class="abs dt" style="left:330px;top:687px">ACQ2009</div>
<div class="abs dt" style="left:433px;top:687px">Television</div>
<div class="abs dt" style="left:553px;top:687px">ABC</div>
<div class="abs dt" style="left:656px;top:687px">France</div>
<div class="abs dt" style="left:759px;top:687px">Europe</div>
<div class="abs dt" style="right:954px;top:687px">60,225</div>
<div class="abs dt" style="right:865px;top:687px">12</div>
<div class="abs dt" style="right:776px;top:687px">722,700</div>
<div class="abs dt" style="right:687px;top:687px">15</div>
<div class="abs dt" style="right:598px;top:687px">903,375</div>
<div class="abs dt" style="right:509px;top:687px">180,675</div>
<div class="abs dt" style="right:417px;top:687px">25%</div>
<div class="abs dt" style="right:1824px;top:704px">Nov-19</div>
<div class="abs dt" style="right:1749px;top:704px">Nov</div>
<div class="abs dt" style="right:1674px;top:704px">2019</div>
<div class="abs dt" style="left:227px;top:704px">REF22145</div>
<div class="abs dt" style="left:330px;top:704px">MAM1543</div>
<div class="abs dt" style="left:433px;top:704px">Refrigerator</div>
<div class="abs dt" style="left:553px;top:704px">ACC</div>
<div class="abs dt" style="left:656px;top:704px">Canada</div>
<div class="abs dt" style="left:759px;top:704px">North America</div>
<div class="abs dt" style="right:954px;top:704px">51,010</div>
<div class="abs dt" style="right:865px;top:704px">16</div>
<div class="abs dt" style="right:776px;top:704px">816,160</div>
<div class="abs dt" style="right:687px;top:704px">18</div>
<div class="abs dt" style="right:598px;top:704px">918,180</div>
<div class="abs dt" style="right:509px;top:704px">102,020</div>
<div class="abs dt" style="right:417px;top:704px">13%</div>
<div class="abs dt" style="right:1824px;top:721px">Oct-17</div>
<div class="abs dt" style="right:1749px;top:721px">Oct</div>
<div class="abs dt" style="right:1674px;top:721px">2017</div>
<div class="abs dt" style="left:227px;top:721px">FLDW244</div>
<div class="abs dt" style="left:330px;top:721px">MES5014</div>
<div class="abs dt" style="left:433px;top:721px">Washing Machine</div>
<div class="abs dt" style="left:553px;top:721px">CCC</div>
<div class="abs dt" style="left:656px;top:721px">England</div>
<div class="abs dt" style="left:759px;top:721px">Europe</div>
<div class="abs dt" style="right:954px;top:721px">53,738</div>
<div class="abs dt" style="right:865px;top:721px">12</div>
<div class="abs dt" style="right:776px;top:721px">644,856</div>
<div class="abs dt" style="right:687px;top:721px">16</div>
<div class="abs dt" style="right:598px;top:721px">859,808</div>
<div class="abs dt" style="right:509px;top:721px">214,952</div>
<div class="abs dt" style="right:417px;top:721px">33%</div>
<div class="abs dt" style="right:1824px;top:738px">Sep-17</div>
<div class="abs dt" style="right:1749px;top:738px">Sep</div>
<div class="abs dt" style="right:1674px;top:738px">2017</div>
<div class="abs dt" style="left:227px;top:738px">65US66</div>
<div class="abs dt" style="left:330px;top:738px">ACQ2010</div>
<div class="abs dt" style="left:433px;top:738px">Television</div>
<div class="abs dt" style="left:553px;top:738px">ABC</div>
<div class="abs dt" style="left:656px;top:738px">France</div>
<div class="abs dt" style="left:759px;top:738px">Europe</div>
<div class="abs dt" style="right:954px;top:738px">51,466</div>
<div class="abs dt" style="right:865px;top:738px">14</div>
<div class="abs dt" style="right:776px;top:738px">720,524</div>
<div class="abs dt" style="right:687px;top:738px">16</div>
<div class="abs dt" style="right:598px;top:738px">823,456</div>
<div class="abs dt" style="right:509px;top:738px">102,932</div>
<div class="abs dt" style="right:417px;top:738px">14%</div>
<div class="abs dt" style="right:1824px;top:755px">Oct-16</div>
<div class="abs dt" style="right:1749px;top:755px">Oct</div>
<div class="abs dt" style="right:1674px;top:755px">2016</div>
<div class="abs dt" style="left:227px;top:755px">FLDQ260</div>
<div class="abs dt" style="left:330px;top:755px">MES4111</div>
<div class="abs dt" style="left:433px;top:755px">Washing Machine</div>
<div class="abs dt" style="left:553px;top:755px">ACC</div>
<div class="abs dt" style="left:656px;top:755px">Canada</div>
<div class="abs dt" style="left:759px;top:755px">North America</div>
<div class="abs dt" style="right:954px;top:755px">76,656</div>
<div class="abs dt" style="right:865px;top:755px">13</div>
<div class="abs dt" style="right:776px;top:755px">996,528</div>
<div class="abs dt" style="right:687px;top:755px">15</div>
<div class="abs dt" style="right:598px;top:755px">1,149,840</div>
<div class="abs dt" style="right:509px;top:755px">153,312</div>
<div class="abs dt" style="right:417px;top:755px">15%</div>
<div class="abs dt" style="right:1824px;top:772px">Sep-17</div>
<div class="abs dt" style="right:1749px;top:772px">Sep</div>
<div class="abs dt" style="right:1674px;top:772px">2017</div>
<div class="abs dt" style="left:227px;top:772px">FLDQ260</div>
<div class="abs dt" style="left:330px;top:772px">MES4111</div>
<div class="abs dt" style="left:433px;top:772px">Washing Machine</div>
<div class="abs dt" style="left:553px;top:772px">CCC</div>
<div class="abs dt" style="left:656px;top:772px">England</div>
<div class="abs dt" style="left:759px;top:772px">Europe</div>
<div class="abs dt" style="right:954px;top:772px">50,034</div>
<div class="abs dt" style="right:865px;top:772px">13</div>
<div class="abs dt" style="right:776px;top:772px">650,442</div>
<div class="abs dt" style="right:687px;top:772px">15</div>
<div class="abs dt" style="right:598px;top:772px">750,510</div>
<div class="abs dt" style="right:509px;top:772px">100,068</div>
<div class="abs dt" style="right:417px;top:772px">15%</div>
<div class="abs dt" style="right:1824px;top:789px">Jan-19</div>
<div class="abs dt" style="right:1749px;top:789px">Jan</div>
<div class="abs dt" style="right:1674px;top:789px">2019</div>
<div class="abs dt" style="left:227px;top:789px">49UK63</div>
<div class="abs dt" style="left:330px;top:789px">ACQ2005</div>
<div class="abs dt" style="left:433px;top:789px">Television</div>
<div class="abs dt" style="left:553px;top:789px">ABC</div>
<div class="abs dt" style="left:656px;top:789px">France</div>
<div class="abs dt" style="left:759px;top:789px">Europe</div>
<div class="abs dt" style="right:954px;top:789px">61,824</div>
<div class="abs dt" style="right:865px;top:789px">10</div>
<div class="abs dt" style="right:776px;top:789px">618,240</div>
<div class="abs dt" style="right:687px;top:789px">12</div>
<div class="abs dt" style="right:598px;top:789px">741,888</div>
<div class="abs dt" style="right:509px;top:789px">123,648</div>
<div class="abs dt" style="right:417px;top:789px">20%</div>
<div class="abs dt" style="right:1824px;top:806px">May-17</div>
<div class="abs dt" style="right:1749px;top:806px">May</div>
<div class="abs dt" style="right:1674px;top:806px">2017</div>
<div class="abs dt" style="left:227px;top:806px">65US66</div>
<div class="abs dt" style="left:330px;top:806px">ACQ2010</div>
<div class="abs dt" style="left:433px;top:806px">Television</div>
<div class="abs dt" style="left:553px;top:806px">DDD</div>
<div class="abs dt" style="left:656px;top:806px">Cameroon</div>
<div class="abs dt" style="left:759px;top:806px">Africa</div>
<div class="abs dt" style="right:954px;top:806px">56,062</div>
<div class="abs dt" style="right:865px;top:806px">14</div>
<div class="abs dt" style="right:776px;top:806px">784,868</div>
<div class="abs dt" style="right:687px;top:806px">16</div>
<div class="abs dt" style="right:598px;top:806px">896,992</div>
<div class="abs dt" style="right:509px;top:806px">112,124</div>
<div class="abs dt" style="right:417px;top:806px">14%</div>
<div class="abs dt" style="right:1824px;top:823px">Sep-16</div>
<div class="abs dt" style="right:1749px;top:823px">Sep</div>
<div class="abs dt" style="right:1674px;top:823px">2016</div>
<div class="abs dt" style="left:227px;top:823px">REF22145</div>
<div class="abs dt" style="left:330px;top:823px">MAM1543</div>
<div class="abs dt" style="left:433px;top:823px">Refrigerator</div>
<div class="abs dt" style="left:553px;top:823px">ABC</div>
<div class="abs dt" style="left:656px;top:823px">France</div>
<div class="abs dt" style="left:759px;top:823px">Europe</div>
<div class="abs dt" style="right:954px;top:823px">76,546</div>
<div class="abs dt" style="right:865px;top:823px">16</div>
<div class="abs dt" style="right:776px;top:823px">1,224,736</div>
<div class="abs dt" style="right:687px;top:823px">18</div>
<div class="abs dt" style="right:598px;top:823px">1,377,828</div>
<div class="abs dt" style="right:509px;top:823px">153,092</div>
<div class="abs dt" style="right:417px;top:823px">13%</div>
<div class="abs dt" style="right:1824px;top:840px">Jan-19</div>
<div class="abs dt" style="right:1749px;top:840px">Jan</div>
<div class="abs dt" style="right:1674px;top:840px">2019</div>
<div class="abs dt" style="left:227px;top:840px">43LM55</div>
<div class="abs dt" style="left:330px;top:840px">ACQ2004</div>
<div class="abs dt" style="left:433px;top:840px">Television</div>
<div class="abs dt" style="left:553px;top:840px">AAA</div>
<div class="abs dt" style="left:656px;top:840px">Egypt</div>
<div class="abs dt" style="left:759px;top:840px">Middle East</div>
<div class="abs dt" style="right:954px;top:840px">61,335</div>
<div class="abs dt" style="right:865px;top:840px">9</div>
<div class="abs dt" style="right:776px;top:840px">552,015</div>
<div class="abs dt" style="right:687px;top:840px">10</div>
<div class="abs dt" style="right:598px;top:840px">613,350</div>
<div class="abs dt" style="right:509px;top:840px">61,335</div>
<div class="abs dt" style="right:417px;top:840px">11%</div>
<div class="abs dt" style="right:1824px;top:857px">Apr-20</div>
<div class="abs dt" style="right:1749px;top:857px">Apr</div>
<div class="abs dt" style="right:1674px;top:857px">2020</div>
<div class="abs dt" style="left:227px;top:857px">65US66</div>
<div class="abs dt" style="left:330px;top:857px">ACQ2010</div>
<div class="abs dt" style="left:433px;top:857px">Television</div>
<div class="abs dt" style="left:553px;top:857px">ADD</div>
<div class="abs dt" style="left:656px;top:857px">Brazil</div>
<div class="abs dt" style="left:759px;top:857px">South America</div>
<div class="abs dt" style="right:954px;top:857px">58,501</div>
<div class="abs dt" style="right:865px;top:857px">14</div>
<div class="abs dt" style="right:776px;top:857px">819,014</div>
<div class="abs dt" style="right:687px;top:857px">16</div>
<div class="abs dt" style="right:598px;top:857px">936,016</div>
<div class="abs dt" style="right:509px;top:857px">117,002</div>
<div class="abs dt" style="right:417px;top:857px">14%</div>
<div class="abs dt" style="right:1824px;top:874px">Mar-19</div>
<div class="abs dt" style="right:1749px;top:874px">Mar</div>
<div class="abs dt" style="right:1674px;top:874px">2019</div>
<div class="abs dt" style="left:227px;top:874px">FLDW244</div>
<div class="abs dt" style="left:330px;top:874px">MES5014</div>
<div class="abs dt" style="left:433px;top:874px">Washing Machine</div>
<div class="abs dt" style="left:553px;top:874px">ADD</div>
<div class="abs dt" style="left:656px;top:874px">Brazil</div>
<div class="abs dt" style="left:759px;top:874px">South America</div>
<div class="abs dt" style="right:954px;top:874px">64,852</div>
<div class="abs dt" style="right:865px;top:874px">12</div>
<div class="abs dt" style="right:776px;top:874px">778,224</div>
<div class="abs dt" style="right:687px;top:874px">16</div>
<div class="abs dt" style="right:598px;top:874px">1,037,632</div>
<div class="abs dt" style="right:509px;top:874px">259,408</div>
<div class="abs dt" style="right:417px;top:874px">33%</div>
<div class="abs dt" style="right:1824px;top:891px">Jan-19</div>
<div class="abs dt" style="right:1749px;top:891px">Jan</div>
<div class="abs dt" style="right:1674px;top:891px">2019</div>
<div class="abs dt" style="left:227px;top:891px">49UK63</div>
<div class="abs dt" style="left:330px;top:891px">ACQ2005</div>
<div class="abs dt" style="left:433px;top:891px">Television</div>
<div class="abs dt" style="left:553px;top:891px">AAA</div>
<div class="abs dt" style="left:656px;top:891px">Egypt</div>
<div class="abs dt" style="left:759px;top:891px">Middle East</div>
<div class="abs dt" style="right:954px;top:891px">67,383</div>
<div class="abs dt" style="right:865px;top:891px">10</div>
<div class="abs dt" style="right:776px;top:891px">673,830</div>
<div class="abs dt" style="right:687px;top:891px">12</div>
<div class="abs dt" style="right:598px;top:891px">808,596</div>
<div class="abs dt" style="right:509px;top:891px">134,766</div>
<div class="abs dt" style="right:417px;top:891px">20%</div>
<div class="abs dt" style="right:1824px;top:908px">Mar-20</div>
<div class="abs dt" style="right:1749px;top:908px">Mar</div>
<div class="abs dt" style="right:1674px;top:908px">2020</div>
<div class="abs dt" style="left:227px;top:908px">FLDBL123</div>
<div class="abs dt" style="left:330px;top:908px">MES51214</div>
<div class="abs dt" style="left:433px;top:908px">Washing Machine</div>
<div class="abs dt" style="left:553px;top:908px">BCC</div>
<div class="abs dt" style="left:656px;top:908px">China</div>
<div class="abs dt" style="left:759px;top:908px">Asia</div>
<div class="abs dt" style="right:954px;top:908px">74,829</div>
<div class="abs dt" style="right:865px;top:908px">13</div>
<div class="abs dt" style="right:776px;top:908px">972,777</div>
<div class="abs dt" style="right:687px;top:908px">17</div>
<div class="abs dt" style="right:598px;top:908px">1,272,093</div>
<div class="abs dt" style="right:509px;top:908px">299,316</div>
<div class="abs dt" style="right:417px;top:908px">31%</div>
<div class="abs dt" style="right:1824px;top:925px">Aug-17</div>
<div class="abs dt" style="right:1749px;top:925px">Aug</div>
<div class="abs dt" style="right:1674px;top:925px">2017</div>
<div class="abs dt" style="left:227px;top:925px">49UK63</div>
<div class="abs dt" style="left:330px;top:925px">ACQ2005</div>
<div class="abs dt" style="left:433px;top:925px">Television</div>
<div class="abs dt" style="left:553px;top:925px">DDD</div>
<div class="abs dt" style="left:656px;top:925px">Cameroon</div>
<div class="abs dt" style="left:759px;top:925px">Africa</div>
<div class="abs dt" style="right:954px;top:925px">69,020</div>
<div class="abs dt" style="right:865px;top:925px">10</div>
<div class="abs dt" style="right:776px;top:925px">690,200</div>
<div class="abs dt" style="right:687px;top:925px">12</div>
<div class="abs dt" style="right:598px;top:925px">828,240</div>
<div class="abs dt" style="right:509px;top:925px">138,040</div>
<div class="abs dt" style="right:417px;top:925px">20%</div>
<div class="abs dt" style="right:1824px;top:942px">Jun-16</div>
<div class="abs dt" style="right:1749px;top:942px">Jun</div>
<div class="abs dt" style="right:1674px;top:942px">2016</div>
<div class="abs dt" style="left:227px;top:942px">55UM73</div>
<div class="abs dt" style="left:330px;top:942px">ACQ2009</div>
<div class="abs dt" style="left:433px;top:942px">Television</div>
<div class="abs dt" style="left:553px;top:942px">ABC</div>
<div class="abs dt" style="left:656px;top:942px">France</div>
<div class="abs dt" style="left:759px;top:942px">Europe</div>
<div class="abs dt" style="right:954px;top:942px">69,424</div>
<div class="abs dt" style="right:865px;top:942px">12</div>
<div class="abs dt" style="right:776px;top:942px">833,088</div>
<div class="abs dt" style="right:687px;top:942px">15</div>
<div class="abs dt" style="right:598px;top:942px">1,041,360</div>
<div class="abs dt" style="right:509px;top:942px">208,272</div>
<div class="abs dt" style="right:417px;top:942px">25%</div>
<div class="abs dt" style="right:1824px;top:959px">Jan-17</div>
<div class="abs dt" style="right:1749px;top:959px">Jan</div>
<div class="abs dt" style="right:1674px;top:959px">2017</div>
<div class="abs dt" style="left:227px;top:959px">49UK63</div>
<div class="abs dt" style="left:330px;top:959px">ACQ2005</div>
<div class="abs dt" style="left:433px;top:959px">Television</div>
<div class="abs dt" style="left:553px;top:959px">ADD</div>
<div class="abs dt" style="left:656px;top:959px">Brazil</div>
<div class="abs dt" style="left:759px;top:959px">South America</div>
<div class="abs dt" style="right:954px;top:959px">67,401</div>
<div class="abs dt" style="right:865px;top:959px">10</div>
<div class="abs dt" style="right:776px;top:959px">674,010</div>
<div class="abs dt" style="right:687px;top:959px">12</div>
<div class="abs dt" style="right:598px;top:959px">808,812</div>
<div class="abs dt" style="right:509px;top:959px">134,802</div>
<div class="abs dt" style="right:417px;top:959px">20%</div>
<div class="abs dt" style="right:1824px;top:976px">Nov-18</div>
<div class="abs dt" style="right:1749px;top:976px">Nov</div>
<div class="abs dt" style="right:1674px;top:976px">2018</div>
<div class="abs dt" style="left:227px;top:976px">43LM55</div>
<div class="abs dt" style="left:330px;top:976px">ACQ2004</div>
<div class="abs dt" style="left:433px;top:976px">Television</div>
<div class="abs dt" style="left:553px;top:976px">ADD</div>
<div class="abs dt" style="left:656px;top:976px">Brazil</div>
<div class="abs dt" style="left:759px;top:976px">South America</div>
<div class="abs dt" style="right:954px;top:976px">71,231</div>
<div class="abs dt" style="right:865px;top:976px">9</div>
<div class="abs dt" style="right:776px;top:976px">641,079</div>
<div class="abs dt" style="right:687px;top:976px">10</div>
<div class="abs dt" style="right:598px;top:976px">712,310</div>
<div class="abs dt" style="right:509px;top:976px">71,231</div>
<div class="abs dt" style="right:417px;top:976px">11%</div>
</div>
<svg class="abs" style="left:26px;top:999px" width="6" height="9" viewBox="0 0 6 9"><path d="M5.5 0.5 L0.5 4.5 L5.5 8.5 Z" fill="#C8C8C8"/></svg>
<svg class="abs" style="left:55px;top:999px" width="6" height="9" viewBox="0 0 6 9"><path d="M0.5 0.5 L5.5 4.5 L0.5 8.5 Z" fill="#C8C8C8"/></svg>
<div class="abs" style="left:100px;top:994px;width:1px;height:21px;background:#A6A6A6"></div>
<div class="abs" style="left:103px;top:993px;width:96px;height:22px;background:#C00000"></div>
<div class="abs tt" style="left:115px;top:996px;font-size:13px;color:#fff">Introduction</div>
<div class="abs" style="left:201px;top:994px;width:1px;height:21px;background:#A6A6A6"></div>
<div class="abs" style="left:204px;top:993px;width:86px;height:22px;background:#55B17E"></div>
<div class="abs tt" style="left:214px;top:996px;font-size:13px;color:#1A1A1A">Dashboard</div>
<div class="abs" style="left:292px;top:990px;width:1px;height:25px;background:#A6A6A6"></div>
<div class="abs" style="left:293px;top:990px;width:82px;height:1px;background:#E6E6E6"></div>
<div class="abs" style="left:293px;top:990px;width:82px;height:23px;background:linear-gradient(#fff 0,#fff 40%,#D5EEDD 100%)"></div>
<div class="abs" style="left:293px;top:1013px;width:82px;height:2px;background:#217346"></div>
<div class="abs tt" style="left:304px;top:996px;font-size:13px;color:#217346;font-weight:bold">Raw Data</div>
<div class="abs" style="left:375px;top:990px;width:1px;height:25px;background:#A6A6A6"></div>
<div class="abs" style="left:377px;top:993px;width:75px;height:22px;background:#8ED1AC"></div>
<div class="abs tt" style="left:387px;top:996px;font-size:13px;color:#1A1A1A">Database</div>
<div class="abs" style="left:454px;top:994px;width:1px;height:21px;background:#A6A6A6"></div>
<svg class="abs" style="left:487px;top:995px" width="18" height="18" viewBox="0 0 18 18"><circle cx="9" cy="9" r="7.5" fill="none" stroke="#666" stroke-width="1.1"/><path d="M9 5 V13 M5 9 H13" stroke="#666" stroke-width="1.2"/></svg>
<!-- h scroll -->
<div class="abs" style="left:1152px;top:998px;width:2px;height:2px;background:#A0A0A0"></div>
<div class="abs" style="left:1152px;top:1003px;width:2px;height:2px;background:#A0A0A0"></div>
<div class="abs" style="left:1152px;top:1008px;width:2px;height:2px;background:#A0A0A0"></div>
<div class="abs" style="left:1169px;top:997px;width:15px;height:15px;background:#fff;border:1px solid #ABABAB"></div>
<svg class="abs" style="left:1174px;top:1000px" width="6" height="9" viewBox="0 0 6 9"><path d="M5.5 0.5 L0.5 4.5 L5.5 8.5 Z" fill="#606060"/></svg>
<div class="abs" style="left:1183px;top:997px;width:697px;height:15px;background:#fff;border:1px solid #ABABAB"></div>
<div class="abs" style="left:1881px;top:997px;width:15px;height:15px;background:#fff;border:1px solid #ABABAB"></div>
<svg class="abs" style="left:1886px;top:1000px" width="6" height="9" viewBox="0 0 6 9"><path d="M0.5 0.5 L5.5 4.5 L0.5 8.5 Z" fill="#606060"/></svg>

<div class="abs" style="left:0;top:1018px;width:1917px;height:21px;background:#F3F2F1;border-top:1px solid #D2D0CE"></div>
<div class="abs" style="left:1620px;top:1019px;width:40px;height:20px;background:#C8C6C4"></div>
<svg class="abs" style="left:1633px;top:1022px" width="14" height="14" viewBox="0 0 14 14"><path d="M1 1 H13 V13 H1 Z M1 5 H13 M1 9 H13 M5 1 V13 M9 1 V13" fill="none" stroke="#222" stroke-width="1.5"/></svg>
<svg class="abs" style="left:1672px;top:1022px" width="16" height="14" viewBox="0 0 16 14"><rect x="0.5" y="0.5" width="14" height="12" fill="none" stroke="#333" stroke-width="1"/><rect x="3.5" y="2.5" width="8" height="8" fill="none" stroke="#333" stroke-width="1"/><path d="M5 4.5 H10 M5 6.5 H10 M5 8.5 H10" stroke="#333" stroke-width="1"/></svg>
<svg class="abs" style="left:1713px;top:1022px" width="15" height="14" viewBox="0 0 15 14"><rect x="0.5" y="0.5" width="14" height="13" fill="none" stroke="#333" stroke-width="1"/><path d="M5.5 0.5 V7.5 H14.5 M9.5 0.5 V5.5 H5.5" fill="none" stroke="#333" stroke-width="1"/></svg>
<div class="abs" style="left:1746px;top:1028px;width:9px;height:1px;background:#444"></div>
<div class="abs" style="left:1759px;top:1029px;width:100px;height:1px;background:#A0A0A0"></div>
<div class="abs" style="left:1807px;top:1023px;width:5px;height:11px;background:#777"></div>
<div class="abs" style="left:1863px;top:1028px;width:9px;height:1px;background:#444"></div>
<div class="abs" style="left:1867px;top:1024px;width:1px;height:9px;background:#444"></div>
<div class="abs tt" style="left:1885px;top:1021px;font-size:11px;color:#555">100%</div>

</body></html>
